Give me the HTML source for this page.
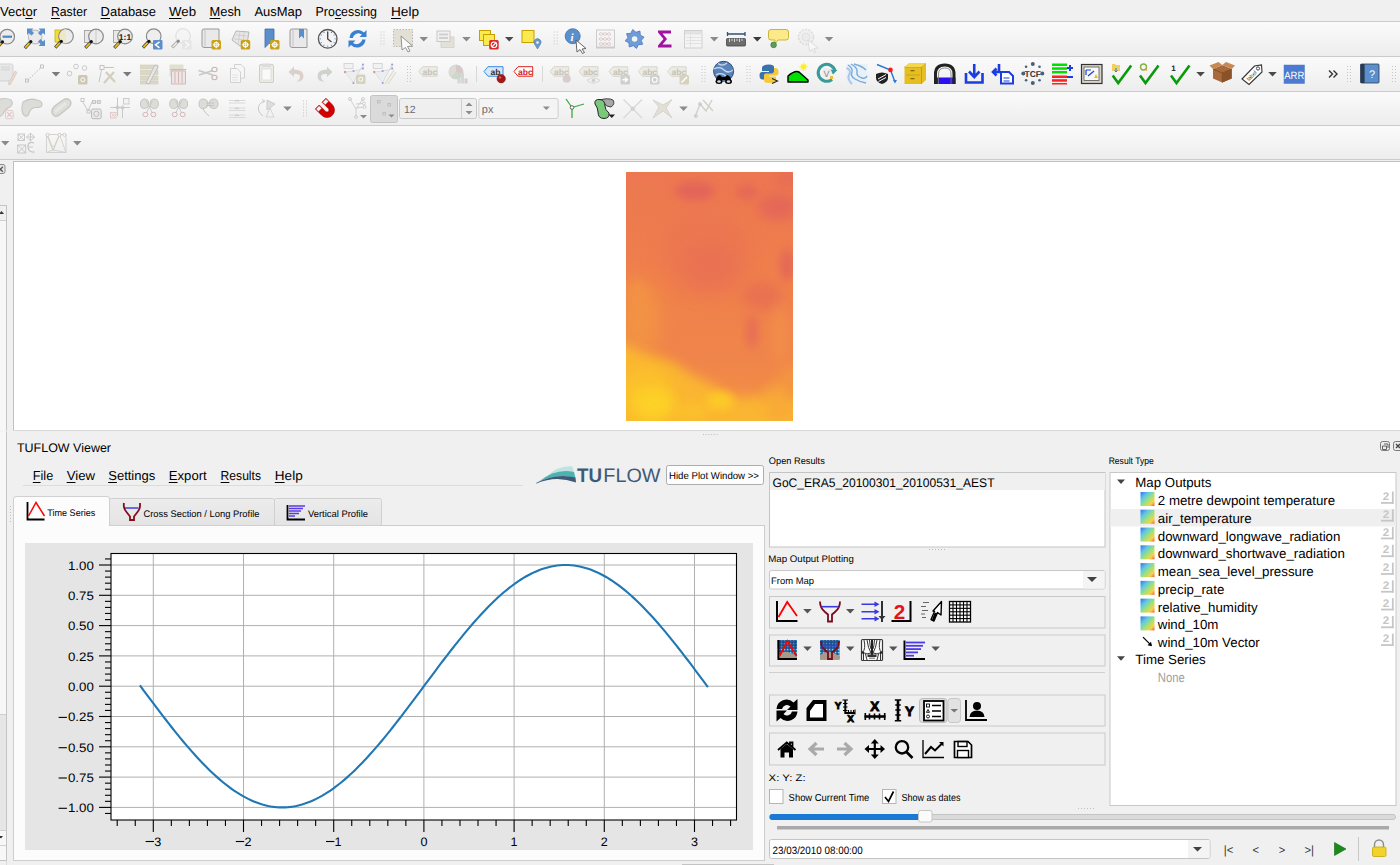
<!DOCTYPE html><html><head><meta charset="utf-8"><style>html,body{margin:0;padding:0;width:1400px;height:865px;overflow:hidden;background:#f0f0f0}svg{display:block;font-family:"Liberation Sans",sans-serif}</style></head><body><svg width="1400" height="865" viewBox="0 0 1400 865" text-rendering="geometricPrecision"><rect x="0" y="0" width="1400" height="865" fill="#f0f0f0" />
<rect x="0" y="0" width="1400" height="21" fill="#f0f0f0" />
<text x="0" y="16" font-size="13.00" fill="#000" textLength="37" lengthAdjust="spacingAndGlyphs" >Vector</text>
<line x1="25.3960756214518" y1="18.5" x2="32.65413658160172" y2="18.5" stroke="#000" stroke-width="1" />
<text x="51" y="16" font-size="13.00" fill="#000" textLength="36" lengthAdjust="spacingAndGlyphs" >Raster</text>
<line x1="51.0" y1="18.5" x2="59.827630113003345" y2="18.5" stroke="#000" stroke-width="1" />
<text x="100.6" y="16" font-size="13.00" fill="#000" textLength="55.4" lengthAdjust="spacingAndGlyphs" >Database</text>
<line x1="100.6" y1="18.5" x2="109.94691732067895" y2="18.5" stroke="#000" stroke-width="1" />
<text x="169" y="16" font-size="13.00" fill="#000" textLength="27" lengthAdjust="spacingAndGlyphs" >Web</text>
<line x1="169.0" y1="18.5" x2="181.5053285287127" y2="18.5" stroke="#000" stroke-width="1" />
<text x="209.6" y="16" font-size="13.00" fill="#000" textLength="31.4" lengthAdjust="spacingAndGlyphs" >Mesh</text>
<line x1="209.6" y1="18.5" x2="220.29674739599974" y2="18.5" stroke="#000" stroke-width="1" />
<text x="254.4" y="16" font-size="13.00" fill="#000" textLength="47.6" lengthAdjust="spacingAndGlyphs" >AusMap</text>
<text x="315.6" y="16" font-size="13.00" fill="#000" textLength="61.4" lengthAdjust="spacingAndGlyphs" >Processing</text>
<line x1="334.91526312464464" y1="18.5" x2="341.12159327816033" y2="18.5" stroke="#000" stroke-width="1" />
<text x="391" y="16" font-size="13.00" fill="#000" textLength="28" lengthAdjust="spacingAndGlyphs" >Help</text>
<line x1="391.0" y1="18.5" x2="400.8325482449476" y2="18.5" stroke="#000" stroke-width="1" />
<defs><linearGradient id="tbg" x1="0" y1="0" x2="0" y2="1"><stop offset="0" stop-color="#fbfbfb"/><stop offset="1" stop-color="#ededed"/></linearGradient></defs>
<rect x="0" y="21" width="1400" height="35" fill="url(#tbg)" />
<line x1="0" y1="21.5" x2="1400" y2="21.5" stroke="#cbcbcb" stroke-width="1" />
<line x1="0" y1="22.5" x2="1400" y2="22.5" stroke="#f9f9f9" stroke-width="1" />
<rect x="0" y="56" width="1400" height="35" fill="url(#tbg)" />
<line x1="0" y1="56.5" x2="1400" y2="56.5" stroke="#cbcbcb" stroke-width="1" />
<line x1="0" y1="57.5" x2="1400" y2="57.5" stroke="#f9f9f9" stroke-width="1" />
<rect x="0" y="91" width="1400" height="34" fill="url(#tbg)" />
<line x1="0" y1="91.5" x2="1400" y2="91.5" stroke="#cbcbcb" stroke-width="1" />
<line x1="0" y1="92.5" x2="1400" y2="92.5" stroke="#f9f9f9" stroke-width="1" />
<rect x="0" y="125" width="1400" height="34" fill="url(#tbg)" />
<line x1="0" y1="125.5" x2="1400" y2="125.5" stroke="#cbcbcb" stroke-width="1" />
<line x1="0" y1="126.5" x2="1400" y2="126.5" stroke="#f9f9f9" stroke-width="1" />
<line x1="0" y1="159.5" x2="1400" y2="159.5" stroke="#cbcbcb" stroke-width="1" />
<rect x="0" y="160" width="13" height="705" fill="#f0f0f0" />
<rect x="-4.5" y="164.5" width="9.5" height="9" fill="#e6e6e6" stroke="#8a8a8a" stroke-width="1" rx="2" />
<path d="M-2 166.8 L2.8 171.8 M-2 171.8 L2.8 166.8" fill="none" stroke="#555" stroke-width="1.3"/>
<rect x="-2" y="205.5" width="8.5" height="660" fill="#f7f7f7" stroke="#c4c4c4" stroke-width="1" />
<rect x="-1.5" y="206" width="7.5" height="14.5" fill="#f0f0f0" />
<line x1="-2" y1="220.5" x2="6" y2="220.5" stroke="#d0d0d0" stroke-width="1" />
<path d="M-1 214 l2.5 -3 l2.5 3 z" fill="#333"/>
<rect x="-1.5" y="715" width="7.5" height="115" fill="#e6e6e6" />
<line x1="-2" y1="714.5" x2="6" y2="714.5" stroke="#d0d0d0" stroke-width="1" />
<line x1="-2" y1="830.5" x2="6" y2="830.5" stroke="#d0d0d0" stroke-width="1" />
<path d="M-1 836 l4 0 l-2 2.5 z" fill="#333"/>
<line x1="-2" y1="845.5" x2="6" y2="845.5" stroke="#d0d0d0" stroke-width="1" />
<line x1="-2" y1="860.5" x2="6" y2="860.5" stroke="#c4c4c4" stroke-width="1" />
<rect x="-2" y="861" width="8.5" height="4" fill="#f0f0f0" />
<rect x="13.5" y="161.5" width="1387" height="269" fill="#ffffff" stroke="#c0c0c0" stroke-width="1" />
<defs><clipPath id="rclip"><rect x="626" y="172" width="167" height="249"/></clipPath><filter id="blur6" x="-50%" y="-50%" width="200%" height="200%"><feGaussianBlur stdDeviation="6"/></filter><filter id="blur10" x="-50%" y="-50%" width="200%" height="200%"><feGaussianBlur stdDeviation="10"/></filter><filter id="blur4" x="-50%" y="-50%" width="200%" height="200%"><feGaussianBlur stdDeviation="4"/></filter><linearGradient id="rgrad" x1="0" y1="0" x2="0" y2="1"><stop offset="0" stop-color="#ec7751"/><stop offset="0.4" stop-color="#ef7f4c"/><stop offset="0.75" stop-color="#f0854a"/><stop offset="1" stop-color="#f39046"/></linearGradient></defs>
<g clip-path="url(#rclip)">
<rect x="626" y="172" width="167" height="249" fill="url(#rgrad)" />
<ellipse cx="705" cy="250" rx="45" ry="40" fill="#ea7352" opacity="0.55" filter="url(#blur10)"/>
<ellipse cx="695" cy="191" rx="20" ry="9" fill="#e1605c" opacity="0.85" filter="url(#blur4)"/>
<ellipse cx="747" cy="192" rx="11" ry="7" fill="#e2625b" opacity="0.75" filter="url(#blur4)"/>
<ellipse cx="778" cy="207" rx="20" ry="13" fill="#e3645a" opacity="0.8" filter="url(#blur6)"/>
<ellipse cx="788" cy="178" rx="14" ry="10" fill="#e56857" opacity="0.6" filter="url(#blur6)"/>
<ellipse cx="787" cy="265" rx="7" ry="16" fill="#e2625a" opacity="0.8" filter="url(#blur4)"/>
<ellipse cx="712" cy="268" rx="30" ry="24" fill="#e86e54" opacity="0.6" filter="url(#blur10)"/>
<ellipse cx="762" cy="296" rx="20" ry="14" fill="#e66b55" opacity="0.65" filter="url(#blur6)"/>
<ellipse cx="752" cy="332" rx="6" ry="17" fill="#e4665a" opacity="0.75" filter="url(#blur4)"/>
<ellipse cx="780" cy="335" rx="8" ry="30" fill="#f39448" opacity="0.6" filter="url(#blur6)"/>
<ellipse cx="640" cy="318" rx="20" ry="38" fill="#f49c40" opacity="0.65" filter="url(#blur10)"/>
<ellipse cx="636" cy="290" rx="10" ry="10" fill="#f39644" opacity="0.5" filter="url(#blur6)"/>
<path d="M610 338 L651 355 L675 363 L690 374 L711 384 L722 391 L737 398 L753 396 L776 399 L800 395 L800 440 L610 440 Z" fill="#fab532" filter="url(#blur6)"/>
<path d="M800 360 L780 372 L770 395 L800 400 Z" fill="#f39a40" opacity="0.7" filter="url(#blur6)"/>
<ellipse cx="646" cy="398" rx="22" ry="26" fill="#fdce28" opacity="0.9" filter="url(#blur10)"/>
<ellipse cx="656" cy="404" rx="18" ry="14" fill="#fdd226" opacity="0.95" filter="url(#blur6)"/>
<ellipse cx="720" cy="401" rx="14" ry="9" fill="#fdcc28" opacity="0.9" filter="url(#blur4)"/>
<ellipse cx="690" cy="412" rx="20" ry="8" fill="#fcc42b" opacity="0.8" filter="url(#blur6)"/>
<ellipse cx="645" cy="378" rx="12" ry="10" fill="#fbbd2e" opacity="0.7" filter="url(#blur6)"/>
<ellipse cx="780" cy="410" rx="14" ry="12" fill="#f7a33a" opacity="0.6" filter="url(#blur6)"/>
<ellipse cx="775" cy="395" rx="14" ry="10" fill="#f9b034" opacity="0.6" filter="url(#blur6)"/>
</g>
<line x1="0" y1="431" x2="1400" y2="431" stroke="#f0f0f0" stroke-width="1" />
<text x="17" y="451.5" font-size="12.50" fill="#000" textLength="94" lengthAdjust="spacingAndGlyphs" >TUFLOW Viewer</text>
<rect x="1380.5" y="441.5" width="9" height="9" fill="#ececec" stroke="#7a7a7a" stroke-width="1" rx="2" />
<rect x="1393.5" y="441.5" width="9" height="9" fill="#ececec" stroke="#7a7a7a" stroke-width="1" rx="2" />
<path d="M1384 444 h4 v4 M1382.5 446 h4 v3.5 h-4 z" fill="none" stroke="#555" stroke-width="0.9"/>
<path d="M1396 444 l4 4 M1400 444 l-4 4" stroke="#444" stroke-width="1.3"/>
<text x="32.8" y="480" font-size="13.00" fill="#000" textLength="20.4" lengthAdjust="spacingAndGlyphs" >File</text>
<line x1="32.8" y1="482.5" x2="40.533087664856474" y2="482.5" stroke="#000" stroke-width="1" />
<text x="66.7" y="480" font-size="13.00" fill="#000" textLength="28.3" lengthAdjust="spacingAndGlyphs" >View</text>
<line x1="66.7" y1="482.5" x2="75.48254579819715" y2="482.5" stroke="#000" stroke-width="1" />
<text x="108.2" y="480" font-size="13.00" fill="#000" textLength="47.1" lengthAdjust="spacingAndGlyphs" >Settings</text>
<line x1="108.2" y1="482.5" x2="116.8952906071614" y2="482.5" stroke="#000" stroke-width="1" />
<text x="168.8" y="480" font-size="13.00" fill="#000" textLength="37.9" lengthAdjust="spacingAndGlyphs" >Export</text>
<line x1="168.8" y1="482.5" x2="177.5475724480969" y2="482.5" stroke="#000" stroke-width="1" />
<text x="220.6" y="480" font-size="13.00" fill="#000" textLength="40.4" lengthAdjust="spacingAndGlyphs" >Results</text>
<line x1="220.6" y1="482.5" x2="229.35017806935332" y2="482.5" stroke="#000" stroke-width="1" />
<text x="274.8" y="480" font-size="13.00" fill="#000" textLength="27.9" lengthAdjust="spacingAndGlyphs" >Help</text>
<line x1="274.8" y1="482.5" x2="284.5974320012156" y2="482.5" stroke="#000" stroke-width="1" />
<line x1="23" y1="485.5" x2="523" y2="485.5" stroke="#dcdcdc" stroke-width="1" />
<path d="M546 477 Q558 465 572.5 466.5 L574 472.5 Q555 470 539 481.5 Z" fill="#bfe3df"/>
<path d="M539 481.5 Q556 468 574 472 L575.5 478 Q556 473 536 483 Z" fill="#4db3b0"/>
<path d="M536 483 Q556 472.5 575.5 477.5 L576 482.5 Q556 475 536.5 483.5 Z" fill="#3f5a76"/>
<text x="577" y="481.6" font-size="19.50" fill="#3f5a76" textLength="25" lengthAdjust="spacingAndGlyphs" font-weight="bold">TU</text>
<text x="603.3" y="481.6" font-size="19.50" fill="#3f5a76" textLength="57.2" lengthAdjust="spacingAndGlyphs" >FLOW</text>
<rect x="666.5" y="465.5" width="97" height="19" fill="#fdfdfd" stroke="#adadad" stroke-width="1" rx="2" />
<text x="669" y="479" font-size="10.00" fill="#000" textLength="90" lengthAdjust="spacingAndGlyphs" >Hide Plot Window &gt;&gt;</text>
<rect x="13.5" y="525.5" width="751" height="335" fill="#fcfcfc" stroke="#cdcdcd" stroke-width="1" />
<defs><linearGradient id="tabg" x1="0" y1="0" x2="0" y2="1"><stop offset="0" stop-color="#ececec"/><stop offset="1" stop-color="#e4e4e4"/></linearGradient></defs>
<rect x="109.5" y="498.5" width="165" height="27" fill="url(#tabg)" stroke="#d0d0d0" stroke-width="1" rx="2" />
<rect x="274.5" y="498.5" width="107" height="27" fill="url(#tabg)" stroke="#d0d0d0" stroke-width="1" rx="2" />
<path d="M13.5 526 V499 Q13.5 496.5 16 496.5 H107 Q109.5 496.5 109.5 499 V526" fill="#fcfcfc" stroke="#d0d0d0" stroke-width="1"/>
<rect x="14" y="524" width="95" height="3" fill="#fcfcfc" />
<path d="M27.5 502 V519.5 H44.5" fill="none" stroke="#000" stroke-width="1.8"/>
<path d="M28.5 516 L36 502.5 L44.5 516" fill="none" stroke="#ff0000" stroke-width="1.5"/>
<text x="47.3" y="515.7" font-size="9.50" fill="#000" textLength="48" lengthAdjust="spacingAndGlyphs" >Time Series</text>
<line x1="124.5" y1="508" x2="138.5" y2="508" stroke="#4a4ae0" stroke-width="1.6" />
<path d="M123.8 503 V506 Q124 509 126.5 512 L130 516.5 V520 H134 V516.5 L137.5 512 Q140 509 140 506 V503" fill="none" stroke="#8b0a1a" stroke-width="1.8"/>
<text x="143.5" y="516.5" font-size="9.50" fill="#000" textLength="116" lengthAdjust="spacingAndGlyphs" >Cross Section / Long Profile</text>
<path d="M287.5 505 V519.5 H305" fill="none" stroke="#000" stroke-width="1.8"/>
<line x1="289" y1="506" x2="305" y2="506" stroke="#5a3ae6" stroke-width="1.5" />
<line x1="289" y1="508.5" x2="303" y2="508.5" stroke="#5a3ae6" stroke-width="1.5" />
<line x1="289" y1="511" x2="301" y2="511" stroke="#5a3ae6" stroke-width="1.5" />
<line x1="289" y1="513.5" x2="299" y2="513.5" stroke="#5a3ae6" stroke-width="1.5" />
<line x1="289" y1="516" x2="295" y2="516" stroke="#5a3ae6" stroke-width="1.5" />
<text x="308" y="516.5" font-size="9.50" fill="#000" textLength="60" lengthAdjust="spacingAndGlyphs" >Vertical Profile</text>
<rect x="25" y="543" width="728" height="307" fill="#e5e5e5" />
<rect x="111" y="553.5" width="625.5" height="266.5" fill="#ffffff" />
<line x1="153.29999999999995" y1="553.5" x2="153.29999999999995" y2="820" stroke="#b0b0b0" stroke-width="1" />
<line x1="243.49999999999997" y1="553.5" x2="243.49999999999997" y2="820" stroke="#b0b0b0" stroke-width="1" />
<line x1="333.7" y1="553.5" x2="333.7" y2="820" stroke="#b0b0b0" stroke-width="1" />
<line x1="423.9" y1="553.5" x2="423.9" y2="820" stroke="#b0b0b0" stroke-width="1" />
<line x1="514.1" y1="553.5" x2="514.1" y2="820" stroke="#b0b0b0" stroke-width="1" />
<line x1="604.3" y1="553.5" x2="604.3" y2="820" stroke="#b0b0b0" stroke-width="1" />
<line x1="694.5" y1="553.5" x2="694.5" y2="820" stroke="#b0b0b0" stroke-width="1" />
<line x1="111" y1="807.4000000000001" x2="736.5" y2="807.4000000000001" stroke="#b0b0b0" stroke-width="1" />
<line x1="111" y1="777.1" x2="736.5" y2="777.1" stroke="#b0b0b0" stroke-width="1" />
<line x1="111" y1="746.8000000000001" x2="736.5" y2="746.8000000000001" stroke="#b0b0b0" stroke-width="1" />
<line x1="111" y1="716.5" x2="736.5" y2="716.5" stroke="#b0b0b0" stroke-width="1" />
<line x1="111" y1="686.2" x2="736.5" y2="686.2" stroke="#b0b0b0" stroke-width="1" />
<line x1="111" y1="655.9000000000001" x2="736.5" y2="655.9000000000001" stroke="#b0b0b0" stroke-width="1" />
<line x1="111" y1="625.6" x2="736.5" y2="625.6" stroke="#b0b0b0" stroke-width="1" />
<line x1="111" y1="595.3000000000001" x2="736.5" y2="595.3000000000001" stroke="#b0b0b0" stroke-width="1" />
<line x1="111" y1="565.0" x2="736.5" y2="565.0" stroke="#b0b0b0" stroke-width="1" />
<polyline points="140.53,686.20 143.36,690.01 146.20,693.81 149.03,697.61 151.86,701.39 154.70,705.16 157.53,708.91 160.36,712.64 163.20,716.34 166.03,720.01 168.87,723.65 171.70,727.26 174.53,730.82 177.37,734.33 180.20,737.80 183.03,741.22 185.87,744.59 188.70,747.90 191.54,751.14 194.37,754.32 197.20,757.44 200.04,760.48 202.87,763.46 205.70,766.35 208.54,769.17 211.37,771.90 214.20,774.55 217.04,777.11 219.87,779.59 222.71,781.97 225.54,784.25 228.37,786.44 231.21,788.53 234.04,790.52 236.87,792.41 239.71,794.19 242.54,795.87 245.38,797.43 248.21,798.89 251.04,800.23 253.88,801.47 256.71,802.59 259.54,803.59 262.38,804.48 265.21,805.25 268.05,805.91 270.88,806.44 273.71,806.86 276.55,807.16 279.38,807.34 282.21,807.40 285.05,807.34 287.88,807.16 290.72,806.86 293.55,806.44 296.38,805.91 299.22,805.25 302.05,804.48 304.88,803.59 307.72,802.59 310.55,801.47 313.39,800.23 316.22,798.89 319.05,797.43 321.89,795.87 324.72,794.19 327.55,792.41 330.39,790.52 333.22,788.53 336.05,786.44 338.89,784.25 341.72,781.97 344.56,779.59 347.39,777.11 350.22,774.55 353.06,771.90 355.89,769.17 358.72,766.35 361.56,763.46 364.39,760.48 367.23,757.44 370.06,754.32 372.89,751.14 375.73,747.90 378.56,744.59 381.39,741.22 384.23,737.80 387.06,734.33 389.90,730.82 392.73,727.26 395.56,723.65 398.40,720.01 401.23,716.34 404.06,712.64 406.90,708.91 409.73,705.16 412.57,701.39 415.40,697.61 418.23,693.81 421.07,690.01 423.90,686.20 426.73,682.39 429.57,678.59 432.40,674.79 435.23,671.01 438.07,667.24 440.90,663.49 443.74,659.76 446.57,656.06 449.40,652.39 452.24,648.75 455.07,645.14 457.90,641.58 460.74,638.07 463.57,634.60 466.41,631.18 469.24,627.81 472.07,624.50 474.91,621.26 477.74,618.08 480.57,614.96 483.41,611.92 486.24,608.94 489.08,606.05 491.91,603.23 494.74,600.50 497.58,597.85 500.41,595.29 503.24,592.81 506.08,590.43 508.91,588.15 511.75,585.96 514.58,583.87 517.41,581.88 520.25,579.99 523.08,578.21 525.91,576.53 528.75,574.97 531.58,573.51 534.41,572.17 537.25,570.93 540.08,569.81 542.92,568.81 545.75,567.92 548.58,567.15 551.42,566.49 554.25,565.96 557.08,565.54 559.92,565.24 562.75,565.06 565.59,565.00 568.42,565.06 571.25,565.24 574.09,565.54 576.92,565.96 579.75,566.49 582.59,567.15 585.42,567.92 588.26,568.81 591.09,569.81 593.92,570.93 596.76,572.17 599.59,573.51 602.42,574.97 605.26,576.53 608.09,578.21 610.93,579.99 613.76,581.88 616.59,583.87 619.43,585.96 622.26,588.15 625.09,590.43 627.93,592.81 630.76,595.29 633.60,597.85 636.43,600.50 639.26,603.23 642.10,606.05 644.93,608.94 647.76,611.92 650.60,614.96 653.43,618.08 656.26,621.26 659.10,624.50 661.93,627.81 664.77,631.18 667.60,634.60 670.43,638.07 673.27,641.58 676.10,645.14 678.93,648.75 681.77,652.39 684.60,656.06 687.44,659.76 690.27,663.49 693.10,667.24 695.94,671.01 698.77,674.79 701.60,678.59 704.44,682.39 707.27,686.20" fill="none" stroke="#1f77b4" stroke-width="2.1" stroke-linecap="square"/>
<rect x="111" y="553.5" width="625.5" height="266.5" fill="none" stroke="#000" stroke-width="1.1" />
<line x1="99" y1="807.4000000000001" x2="111" y2="807.4000000000001" stroke="#000" stroke-width="1.1" />
<text x="68" y="812.1000000000001" font-size="12.30" fill="#000" textLength="25.8" lengthAdjust="spacingAndGlyphs" >1.00</text>
<line x1="58.6" y1="808.3000000000001" x2="66.9" y2="808.3000000000001" stroke="#000" stroke-width="1.1" />
<line x1="99" y1="777.1" x2="111" y2="777.1" stroke="#000" stroke-width="1.1" />
<text x="68" y="781.8000000000001" font-size="12.30" fill="#000" textLength="25.8" lengthAdjust="spacingAndGlyphs" >0.75</text>
<line x1="58.6" y1="778.0" x2="66.9" y2="778.0" stroke="#000" stroke-width="1.1" />
<line x1="99" y1="746.8000000000001" x2="111" y2="746.8000000000001" stroke="#000" stroke-width="1.1" />
<text x="68" y="751.5000000000001" font-size="12.30" fill="#000" textLength="25.8" lengthAdjust="spacingAndGlyphs" >0.50</text>
<line x1="58.6" y1="747.7" x2="66.9" y2="747.7" stroke="#000" stroke-width="1.1" />
<line x1="99" y1="716.5" x2="111" y2="716.5" stroke="#000" stroke-width="1.1" />
<text x="68" y="721.2" font-size="12.30" fill="#000" textLength="25.8" lengthAdjust="spacingAndGlyphs" >0.25</text>
<line x1="58.6" y1="717.4" x2="66.9" y2="717.4" stroke="#000" stroke-width="1.1" />
<line x1="99" y1="686.2" x2="111" y2="686.2" stroke="#000" stroke-width="1.1" />
<text x="68" y="690.9000000000001" font-size="12.30" fill="#000" textLength="25.8" lengthAdjust="spacingAndGlyphs" >0.00</text>
<line x1="99" y1="655.9000000000001" x2="111" y2="655.9000000000001" stroke="#000" stroke-width="1.1" />
<text x="68" y="660.6000000000001" font-size="12.30" fill="#000" textLength="25.8" lengthAdjust="spacingAndGlyphs" >0.25</text>
<line x1="99" y1="625.6" x2="111" y2="625.6" stroke="#000" stroke-width="1.1" />
<text x="68" y="630.3000000000001" font-size="12.30" fill="#000" textLength="25.8" lengthAdjust="spacingAndGlyphs" >0.50</text>
<line x1="99" y1="595.3000000000001" x2="111" y2="595.3000000000001" stroke="#000" stroke-width="1.1" />
<text x="68" y="600.0000000000001" font-size="12.30" fill="#000" textLength="25.8" lengthAdjust="spacingAndGlyphs" >0.75</text>
<line x1="99" y1="565.0" x2="111" y2="565.0" stroke="#000" stroke-width="1.1" />
<text x="68" y="569.7" font-size="12.30" fill="#000" textLength="25.8" lengthAdjust="spacingAndGlyphs" >1.00</text>
<line x1="105" y1="813.46" x2="111" y2="813.46" stroke="#000" stroke-width="1.1" />
<line x1="105" y1="801.34" x2="111" y2="801.34" stroke="#000" stroke-width="1.1" />
<line x1="105" y1="795.2800000000001" x2="111" y2="795.2800000000001" stroke="#000" stroke-width="1.1" />
<line x1="105" y1="789.22" x2="111" y2="789.22" stroke="#000" stroke-width="1.1" />
<line x1="105" y1="783.1600000000001" x2="111" y2="783.1600000000001" stroke="#000" stroke-width="1.1" />
<line x1="105" y1="771.0400000000001" x2="111" y2="771.0400000000001" stroke="#000" stroke-width="1.1" />
<line x1="105" y1="764.98" x2="111" y2="764.98" stroke="#000" stroke-width="1.1" />
<line x1="105" y1="758.9200000000001" x2="111" y2="758.9200000000001" stroke="#000" stroke-width="1.1" />
<line x1="105" y1="752.86" x2="111" y2="752.86" stroke="#000" stroke-width="1.1" />
<line x1="105" y1="740.74" x2="111" y2="740.74" stroke="#000" stroke-width="1.1" />
<line x1="105" y1="734.6800000000001" x2="111" y2="734.6800000000001" stroke="#000" stroke-width="1.1" />
<line x1="105" y1="728.62" x2="111" y2="728.62" stroke="#000" stroke-width="1.1" />
<line x1="105" y1="722.5600000000001" x2="111" y2="722.5600000000001" stroke="#000" stroke-width="1.1" />
<line x1="105" y1="710.44" x2="111" y2="710.44" stroke="#000" stroke-width="1.1" />
<line x1="105" y1="704.38" x2="111" y2="704.38" stroke="#000" stroke-width="1.1" />
<line x1="105" y1="698.32" x2="111" y2="698.32" stroke="#000" stroke-width="1.1" />
<line x1="105" y1="692.26" x2="111" y2="692.26" stroke="#000" stroke-width="1.1" />
<line x1="105" y1="680.1400000000001" x2="111" y2="680.1400000000001" stroke="#000" stroke-width="1.1" />
<line x1="105" y1="674.08" x2="111" y2="674.08" stroke="#000" stroke-width="1.1" />
<line x1="105" y1="668.0200000000001" x2="111" y2="668.0200000000001" stroke="#000" stroke-width="1.1" />
<line x1="105" y1="661.96" x2="111" y2="661.96" stroke="#000" stroke-width="1.1" />
<line x1="105" y1="649.84" x2="111" y2="649.84" stroke="#000" stroke-width="1.1" />
<line x1="105" y1="643.7800000000001" x2="111" y2="643.7800000000001" stroke="#000" stroke-width="1.1" />
<line x1="105" y1="637.72" x2="111" y2="637.72" stroke="#000" stroke-width="1.1" />
<line x1="105" y1="631.6600000000001" x2="111" y2="631.6600000000001" stroke="#000" stroke-width="1.1" />
<line x1="105" y1="619.5400000000001" x2="111" y2="619.5400000000001" stroke="#000" stroke-width="1.1" />
<line x1="105" y1="613.48" x2="111" y2="613.48" stroke="#000" stroke-width="1.1" />
<line x1="105" y1="607.4200000000001" x2="111" y2="607.4200000000001" stroke="#000" stroke-width="1.1" />
<line x1="105" y1="601.36" x2="111" y2="601.36" stroke="#000" stroke-width="1.1" />
<line x1="105" y1="589.24" x2="111" y2="589.24" stroke="#000" stroke-width="1.1" />
<line x1="105" y1="583.1800000000001" x2="111" y2="583.1800000000001" stroke="#000" stroke-width="1.1" />
<line x1="105" y1="577.12" x2="111" y2="577.12" stroke="#000" stroke-width="1.1" />
<line x1="105" y1="571.0600000000001" x2="111" y2="571.0600000000001" stroke="#000" stroke-width="1.1" />
<line x1="105" y1="558.94" x2="111" y2="558.94" stroke="#000" stroke-width="1.1" />
<line x1="153.29999999999995" y1="820" x2="153.29999999999995" y2="832" stroke="#000" stroke-width="1.1" />
<line x1="145.59999999999997" y1="841.5" x2="153.99999999999994" y2="841.5" stroke="#000" stroke-width="1.1" />
<text x="154.19999999999996" y="845.5" font-size="12.30" fill="#000" textLength="7" lengthAdjust="spacingAndGlyphs" >3</text>
<line x1="243.49999999999997" y1="820" x2="243.49999999999997" y2="832" stroke="#000" stroke-width="1.1" />
<line x1="235.79999999999998" y1="841.5" x2="244.19999999999996" y2="841.5" stroke="#000" stroke-width="1.1" />
<text x="244.39999999999998" y="845.5" font-size="12.30" fill="#000" textLength="7" lengthAdjust="spacingAndGlyphs" >2</text>
<line x1="333.7" y1="820" x2="333.7" y2="832" stroke="#000" stroke-width="1.1" />
<line x1="326.0" y1="841.5" x2="334.4" y2="841.5" stroke="#000" stroke-width="1.1" />
<text x="334.59999999999997" y="845.5" font-size="12.30" fill="#000" textLength="7" lengthAdjust="spacingAndGlyphs" >1</text>
<line x1="423.9" y1="820" x2="423.9" y2="832" stroke="#000" stroke-width="1.1" />
<text x="420.4" y="845.5" font-size="12.30" fill="#000" textLength="7" lengthAdjust="spacingAndGlyphs" >0</text>
<line x1="514.1" y1="820" x2="514.1" y2="832" stroke="#000" stroke-width="1.1" />
<text x="510.6" y="845.5" font-size="12.30" fill="#000" textLength="7" lengthAdjust="spacingAndGlyphs" >1</text>
<line x1="604.3" y1="820" x2="604.3" y2="832" stroke="#000" stroke-width="1.1" />
<text x="600.8" y="845.5" font-size="12.30" fill="#000" textLength="7" lengthAdjust="spacingAndGlyphs" >2</text>
<line x1="694.5" y1="820" x2="694.5" y2="832" stroke="#000" stroke-width="1.1" />
<text x="691.0" y="845.5" font-size="12.30" fill="#000" textLength="7" lengthAdjust="spacingAndGlyphs" >3</text>
<line x1="117.21999999999991" y1="820" x2="117.21999999999991" y2="826" stroke="#000" stroke-width="1.1" />
<line x1="135.25999999999993" y1="820" x2="135.25999999999993" y2="826" stroke="#000" stroke-width="1.1" />
<line x1="171.33999999999995" y1="820" x2="171.33999999999995" y2="826" stroke="#000" stroke-width="1.1" />
<line x1="189.37999999999997" y1="820" x2="189.37999999999997" y2="826" stroke="#000" stroke-width="1.1" />
<line x1="207.41999999999993" y1="820" x2="207.41999999999993" y2="826" stroke="#000" stroke-width="1.1" />
<line x1="225.45999999999995" y1="820" x2="225.45999999999995" y2="826" stroke="#000" stroke-width="1.1" />
<line x1="261.53999999999996" y1="820" x2="261.53999999999996" y2="826" stroke="#000" stroke-width="1.1" />
<line x1="279.5799999999999" y1="820" x2="279.5799999999999" y2="826" stroke="#000" stroke-width="1.1" />
<line x1="297.61999999999995" y1="820" x2="297.61999999999995" y2="826" stroke="#000" stroke-width="1.1" />
<line x1="315.65999999999997" y1="820" x2="315.65999999999997" y2="826" stroke="#000" stroke-width="1.1" />
<line x1="351.73999999999995" y1="820" x2="351.73999999999995" y2="826" stroke="#000" stroke-width="1.1" />
<line x1="369.78" y1="820" x2="369.78" y2="826" stroke="#000" stroke-width="1.1" />
<line x1="387.82" y1="820" x2="387.82" y2="826" stroke="#000" stroke-width="1.1" />
<line x1="405.85999999999996" y1="820" x2="405.85999999999996" y2="826" stroke="#000" stroke-width="1.1" />
<line x1="441.94" y1="820" x2="441.94" y2="826" stroke="#000" stroke-width="1.1" />
<line x1="459.97999999999996" y1="820" x2="459.97999999999996" y2="826" stroke="#000" stroke-width="1.1" />
<line x1="478.02" y1="820" x2="478.02" y2="826" stroke="#000" stroke-width="1.1" />
<line x1="496.06" y1="820" x2="496.06" y2="826" stroke="#000" stroke-width="1.1" />
<line x1="532.14" y1="820" x2="532.14" y2="826" stroke="#000" stroke-width="1.1" />
<line x1="550.18" y1="820" x2="550.18" y2="826" stroke="#000" stroke-width="1.1" />
<line x1="568.22" y1="820" x2="568.22" y2="826" stroke="#000" stroke-width="1.1" />
<line x1="586.26" y1="820" x2="586.26" y2="826" stroke="#000" stroke-width="1.1" />
<line x1="622.34" y1="820" x2="622.34" y2="826" stroke="#000" stroke-width="1.1" />
<line x1="640.38" y1="820" x2="640.38" y2="826" stroke="#000" stroke-width="1.1" />
<line x1="658.42" y1="820" x2="658.42" y2="826" stroke="#000" stroke-width="1.1" />
<line x1="676.46" y1="820" x2="676.46" y2="826" stroke="#000" stroke-width="1.1" />
<line x1="712.54" y1="820" x2="712.54" y2="826" stroke="#000" stroke-width="1.1" />
<line x1="730.58" y1="820" x2="730.58" y2="826" stroke="#000" stroke-width="1.1" />
<text x="768.8" y="463.7" font-size="9.50" fill="#000" textLength="56" lengthAdjust="spacingAndGlyphs" >Open Results</text>
<rect x="769.5" y="472.5" width="335.5" height="74.5" fill="#ffffff" stroke="#c4c4c4" stroke-width="1" />
<rect x="770" y="473" width="335" height="17" fill="#f0f0f0" />
<text x="772.5" y="486.8" font-size="12.50" fill="#000" textLength="222" lengthAdjust="spacingAndGlyphs" >GoC_ERA5_20100301_20100531_AEST</text>
<rect x="929" y="549" width="1" height="1" fill="#b8b8b8" />
<rect x="932" y="549" width="1" height="1" fill="#b8b8b8" />
<rect x="935" y="549" width="1" height="1" fill="#b8b8b8" />
<rect x="938" y="549" width="1" height="1" fill="#b8b8b8" />
<rect x="941" y="549" width="1" height="1" fill="#b8b8b8" />
<rect x="944" y="549" width="1" height="1" fill="#b8b8b8" />
<text x="768.3" y="562.2" font-size="9.50" fill="#000" textLength="85.5" lengthAdjust="spacingAndGlyphs" >Map Output Plotting</text>
<rect x="769.5" y="570.5" width="335.5" height="18.5" fill="#ffffff" stroke="#c8c8c8" stroke-width="1" rx="2" />
<rect x="1083" y="571" width="21.5" height="17.5" fill="#f4f4f4" />
<text x="771" y="584" font-size="9.50" fill="#000" textLength="43" lengthAdjust="spacingAndGlyphs" >From Map</text>
<path d="M1087 577 h10 l-5 5 z" fill="#404040"/>
<rect x="769.5" y="596.5" width="335.5" height="31.5" fill="none" stroke="#c9c9c9" stroke-width="1" />
<rect x="769.5" y="635.0" width="335.5" height="31" fill="none" stroke="#c9c9c9" stroke-width="1" />
<rect x="769.5" y="695.0" width="335.5" height="31" fill="none" stroke="#c9c9c9" stroke-width="1" />
<rect x="769.5" y="733.0" width="335.5" height="32" fill="none" stroke="#c9c9c9" stroke-width="1" />
<line x1="769" y1="672.5" x2="1105" y2="672.5" stroke="#cfcfcf" stroke-width="1" />
<text x="768.6" y="780.7" font-size="9.50" fill="#000" textLength="37" lengthAdjust="spacingAndGlyphs" >X:  Y:  Z:</text>
<rect x="769.5" y="789.5" width="13.5" height="14" fill="#ffffff" stroke="#b5b5b5" stroke-width="1" />
<text x="788.6" y="801" font-size="10.20" fill="#000" textLength="80.7" lengthAdjust="spacingAndGlyphs" >Show Current Time</text>
<rect x="882.5" y="789.5" width="13.5" height="14" fill="#ffffff" stroke="#b5b5b5" stroke-width="1" />
<path d="M885 797 L888.5 801.5 L893.5 791.5" fill="none" stroke="#000" stroke-width="1.7"/>
<text x="901.4" y="801" font-size="10.20" fill="#000" textLength="59" lengthAdjust="spacingAndGlyphs" >Show as dates</text>
<rect x="1078" y="808" width="1" height="1" fill="#c0c0c0" />
<rect x="1081" y="808" width="1" height="1" fill="#c0c0c0" />
<rect x="1084" y="808" width="1" height="1" fill="#c0c0c0" />
<rect x="1087" y="808" width="1" height="1" fill="#c0c0c0" />
<rect x="1090" y="808" width="1" height="1" fill="#c0c0c0" />
<rect x="1093" y="808" width="1" height="1" fill="#c0c0c0" />
<rect x="769.5" y="814.5" width="626" height="5" fill="#dadada" stroke="#c4c4c4" stroke-width="1" rx="2.5" />
<rect x="769.5" y="814" width="152" height="6" fill="#1979d5" rx="3" />
<rect x="918.5" y="810.5" width="13.5" height="11.5" fill="#fbfbfb" stroke="#c6c6c6" stroke-width="1" rx="2" />
<rect x="777" y="826" width="612" height="3.5" fill="#a9a9a9" />
<rect x="769.5" y="839.5" width="440.5" height="19" fill="#ffffff" stroke="#c4c4c4" stroke-width="1" rx="2" />
<rect x="1188" y="840" width="21.5" height="18" fill="#f4f4f4" />
<text x="772.5" y="853.8" font-size="10.60" fill="#000" textLength="90.3" lengthAdjust="spacingAndGlyphs" >23/03/2010 08:00:00</text>
<path d="M1193 847 h9 l-4.5 4.5 z" fill="#404040"/>
<text x="1223.8" y="853.5" font-size="12.00" fill="#333" textLength="9.5" lengthAdjust="spacingAndGlyphs" >|&lt;</text>
<text x="1252.5" y="853.5" font-size="12.00" fill="#333" textLength="6.5" lengthAdjust="spacingAndGlyphs" >&lt;</text>
<text x="1278.8" y="853.5" font-size="12.00" fill="#333" textLength="6.5" lengthAdjust="spacingAndGlyphs" >&gt;</text>
<text x="1304.5" y="853.5" font-size="12.00" fill="#333" textLength="9.5" lengthAdjust="spacingAndGlyphs" >&gt;|</text>
<path d="M1334.5 842.5 L1346 849 L1334.5 855.5 Z" fill="#1a8a1a" stroke="#0d6a0d" stroke-width="0.6"/>
<line x1="1358.5" y1="837" x2="1358.5" y2="861" stroke="#c8c8c8" stroke-width="1" />
<path d="M1374.5 847 V844.5 A4.5 4.5 0 0 1 1383.5 844.5 V847" fill="none" stroke="#8c8c8c" stroke-width="1.4"/>
<rect x="1372.5" y="847" width="13.5" height="9.5" fill="#f1d32a" stroke="#c8a800" stroke-width="0.8" rx="1.5" />
<text x="1108.7" y="463.7" font-size="9.50" fill="#000" textLength="45" lengthAdjust="spacingAndGlyphs" >Result Type</text>
<rect x="1110" y="472.5" width="286" height="333" fill="#ffffff" stroke="#c8c8c8" stroke-width="1" />
<rect x="1110.5" y="509" width="285" height="17.5" fill="#efefef" />
<path d="M1117 479.5 h8 l-4 4.5 z" fill="#444"/>
<text x="1135.3" y="487.3" font-size="13.30" fill="#000" textLength="76" lengthAdjust="spacingAndGlyphs" >Map Outputs</text>
<defs><linearGradient id="mico" x1="0" y1="0" x2="1" y2="1"><stop offset="0" stop-color="#3a6fe0"/><stop offset="0.3" stop-color="#5ec8e8"/><stop offset="0.55" stop-color="#9fe07a"/><stop offset="0.8" stop-color="#f7d24a"/><stop offset="1" stop-color="#f05a3a"/></linearGradient></defs>
<rect x="1140.5" y="492.0" width="14" height="14" fill="url(#mico)" />
<text x="1157.8" y="505.0" font-size="13.30" fill="#000" >2 metre dewpoint temperature</text>
<text x="1382.7" y="500.0" font-size="11" font-weight="bold" fill="#c6c6c6" textLength="6.5" lengthAdjust="spacingAndGlyphs">2</text>
<line x1="1392.8" y1="491.5" x2="1392.8" y2="503.8" stroke="#c6c6c6" stroke-width="1.8" />
<line x1="1381" y1="502.9" x2="1393.7" y2="502.9" stroke="#c6c6c6" stroke-width="1.8" />
<rect x="1140.5" y="509.77" width="14" height="14" fill="url(#mico)" />
<text x="1157.8" y="522.77" font-size="13.30" fill="#000" >air_temperature</text>
<text x="1382.7" y="517.77" font-size="11" font-weight="bold" fill="#c6c6c6" textLength="6.5" lengthAdjust="spacingAndGlyphs">2</text>
<line x1="1392.8" y1="509.27" x2="1392.8" y2="521.5699999999999" stroke="#c6c6c6" stroke-width="1.8" />
<line x1="1381" y1="520.67" x2="1393.7" y2="520.67" stroke="#c6c6c6" stroke-width="1.8" />
<rect x="1140.5" y="527.54" width="14" height="14" fill="url(#mico)" />
<text x="1157.8" y="540.54" font-size="13.30" fill="#000" >downward_longwave_radiation</text>
<text x="1382.7" y="535.54" font-size="11" font-weight="bold" fill="#c6c6c6" textLength="6.5" lengthAdjust="spacingAndGlyphs">2</text>
<line x1="1392.8" y1="527.04" x2="1392.8" y2="539.3399999999999" stroke="#c6c6c6" stroke-width="1.8" />
<line x1="1381" y1="538.4399999999999" x2="1393.7" y2="538.4399999999999" stroke="#c6c6c6" stroke-width="1.8" />
<rect x="1140.5" y="545.31" width="14" height="14" fill="url(#mico)" />
<text x="1157.8" y="558.31" font-size="13.30" fill="#000" >downward_shortwave_radiation</text>
<text x="1382.7" y="553.31" font-size="11" font-weight="bold" fill="#c6c6c6" textLength="6.5" lengthAdjust="spacingAndGlyphs">2</text>
<line x1="1392.8" y1="544.81" x2="1392.8" y2="557.1099999999999" stroke="#c6c6c6" stroke-width="1.8" />
<line x1="1381" y1="556.2099999999999" x2="1393.7" y2="556.2099999999999" stroke="#c6c6c6" stroke-width="1.8" />
<rect x="1140.5" y="563.08" width="14" height="14" fill="url(#mico)" />
<text x="1157.8" y="576.08" font-size="13.30" fill="#000" >mean_sea_level_pressure</text>
<text x="1382.7" y="571.08" font-size="11" font-weight="bold" fill="#c6c6c6" textLength="6.5" lengthAdjust="spacingAndGlyphs">2</text>
<line x1="1392.8" y1="562.58" x2="1392.8" y2="574.88" stroke="#c6c6c6" stroke-width="1.8" />
<line x1="1381" y1="573.98" x2="1393.7" y2="573.98" stroke="#c6c6c6" stroke-width="1.8" />
<rect x="1140.5" y="580.85" width="14" height="14" fill="url(#mico)" />
<text x="1157.8" y="593.85" font-size="13.30" fill="#000" >precip_rate</text>
<text x="1382.7" y="588.85" font-size="11" font-weight="bold" fill="#c6c6c6" textLength="6.5" lengthAdjust="spacingAndGlyphs">2</text>
<line x1="1392.8" y1="580.35" x2="1392.8" y2="592.65" stroke="#c6c6c6" stroke-width="1.8" />
<line x1="1381" y1="591.75" x2="1393.7" y2="591.75" stroke="#c6c6c6" stroke-width="1.8" />
<rect x="1140.5" y="598.62" width="14" height="14" fill="url(#mico)" />
<text x="1157.8" y="611.62" font-size="13.30" fill="#000" >relative_humidity</text>
<text x="1382.7" y="606.62" font-size="11" font-weight="bold" fill="#c6c6c6" textLength="6.5" lengthAdjust="spacingAndGlyphs">2</text>
<line x1="1392.8" y1="598.12" x2="1392.8" y2="610.42" stroke="#c6c6c6" stroke-width="1.8" />
<line x1="1381" y1="609.52" x2="1393.7" y2="609.52" stroke="#c6c6c6" stroke-width="1.8" />
<rect x="1140.5" y="616.39" width="14" height="14" fill="url(#mico)" />
<text x="1157.8" y="629.39" font-size="13.30" fill="#000" >wind_10m</text>
<text x="1382.7" y="624.39" font-size="11" font-weight="bold" fill="#c6c6c6" textLength="6.5" lengthAdjust="spacingAndGlyphs">2</text>
<line x1="1392.8" y1="615.89" x2="1392.8" y2="628.1899999999999" stroke="#c6c6c6" stroke-width="1.8" />
<line x1="1381" y1="627.29" x2="1393.7" y2="627.29" stroke="#c6c6c6" stroke-width="1.8" />
<path d="M1143 637.16 L1151 645.16" stroke="#000" stroke-width="1.2"/><path d="M1152 646.16 l-4.5 -1 l3.5 -3.5 z" fill="#000"/>
<text x="1157.8" y="647.16" font-size="13.30" fill="#000" >wind_10m Vector</text>
<text x="1382.7" y="642.16" font-size="11" font-weight="bold" fill="#c6c6c6" textLength="6.5" lengthAdjust="spacingAndGlyphs">2</text>
<line x1="1392.8" y1="633.66" x2="1392.8" y2="645.9599999999999" stroke="#c6c6c6" stroke-width="1.8" />
<line x1="1381" y1="645.06" x2="1393.7" y2="645.06" stroke="#c6c6c6" stroke-width="1.8" />
<path d="M1117 656.3 h8 l-4 4.5 z" fill="#444"/>
<text x="1135.3" y="664.3" font-size="13.30" fill="#000" >Time Series</text>
<text x="1157.8" y="682.3" font-size="13.30" fill="#a0a0a0" textLength="27" lengthAdjust="spacingAndGlyphs" >None</text>
<rect x="682" y="864" width="92" height="1" fill="#c4c4c4" />
<rect x="10" y="506" width="1" height="1" fill="#c0c0c0" />
<rect x="10" y="509" width="1" height="1" fill="#c0c0c0" />
<rect x="10" y="512" width="1" height="1" fill="#c0c0c0" />
<rect x="10" y="515" width="1" height="1" fill="#c0c0c0" />
<rect x="10" y="518" width="1" height="1" fill="#c0c0c0" />
<rect x="10" y="521" width="1" height="1" fill="#c0c0c0" />
<rect x="703.0" y="434" width="1" height="1" fill="#bdbdbd" />
<rect x="705.7" y="434" width="1" height="1" fill="#bdbdbd" />
<rect x="708.4" y="434" width="1" height="1" fill="#bdbdbd" />
<rect x="711.1" y="434" width="1" height="1" fill="#bdbdbd" />
<rect x="713.8" y="434" width="1" height="1" fill="#bdbdbd" />
<rect x="716.5" y="434" width="1" height="1" fill="#bdbdbd" />
<line x1="2.2359999999999998" y1="41.956" x2="-3.564" y2="48.156000000000006" stroke="#4a4a4a" stroke-width="3.2"/><line x1="1.0359999999999998" y1="43.256" x2="-3.064" y2="47.656000000000006" stroke="#f2c21a" stroke-width="1.7"/><circle cx="7.2" cy="36.7" r="7.3" fill="#ececec" stroke="#8a8a8a" stroke-width="1.2"/><line x1="2.5" y1="36.7" x2="12" y2="36.7" stroke="#4f86c4" stroke-width="2.2"/><circle cx="2.5359999999999996" cy="41.656000000000006" r="1.5" fill="#111"/>
<rect x="24.5" y="28.5" width="20.5" height="17.5" fill="none"/>
<line x1="30.576" y1="41.896" x2="24.776" y2="48.096000000000004" stroke="#4a4a4a" stroke-width="3.2"/><line x1="29.376" y1="43.196" x2="25.276" y2="47.596000000000004" stroke="#f2c21a" stroke-width="1.7"/><circle cx="35.2" cy="37" r="6.8" fill="#eaeaea" stroke="#c0c0c0" stroke-width="1.2"/><circle cx="30.876" cy="41.596000000000004" r="1.5" fill="#111"/>
<path d="M27 28.5 h6.5 l-2 2 l2.5 2.5 l-2.5 2.5 l-2.5 -2.5 l-2 2 z" fill="#5a8fcb"/><path d="M45 28.5 h-6.5 l2 2 l-2.5 2.5 l2.5 2.5 l2.5 -2.5 l2 2 z" fill="#5a8fcb"/><path d="M45 46 h-6.5 l2 -2 l-2.5 -2.5 l2.5 -2.5 l2.5 2.5 l2 -2 z" fill="#5a8fcb"/>
<rect x="55" y="30" width="7" height="12" fill="#f5dc3a" stroke="#c9b200" stroke-width="0.8"/>
<line x1="61.036" y1="41.456" x2="55.236000000000004" y2="47.656000000000006" stroke="#4a4a4a" stroke-width="3.2"/><line x1="59.836" y1="42.756" x2="55.736000000000004" y2="47.156000000000006" stroke="#f2c21a" stroke-width="1.7"/><circle cx="66" cy="36.2" r="7.3" fill="#ececec" stroke="#8a8a8a" stroke-width="1.2"/><path d="M66 29 A7.3 7.3 0 0 0 66 43.5 Z" fill="#efe8c8"/><circle cx="61.336" cy="41.156000000000006" r="1.5" fill="#111"/>
<rect x="84.5" y="30.5" width="7" height="12" fill="#e8e8e8" stroke="#9a9a9a" stroke-width="0.8"/>
<line x1="91.036" y1="41.756" x2="85.236" y2="47.956" stroke="#4a4a4a" stroke-width="3.2"/><line x1="89.836" y1="43.056" x2="85.736" y2="47.456" stroke="#f2c21a" stroke-width="1.7"/><circle cx="96" cy="36.5" r="7.3" fill="#ececec" stroke="#8a8a8a" stroke-width="1.2"/><line x1="96" y1="30" x2="96" y2="43" stroke="#c8c8c8" stroke-width="1"/><circle cx="91.336" cy="41.456" r="1.5" fill="#111"/>
<rect x="113.5" y="30.5" width="7" height="12" fill="#e8e8e8" stroke="#9a9a9a" stroke-width="0.8"/>
<line x1="120.036" y1="41.756" x2="114.236" y2="47.956" stroke="#4a4a4a" stroke-width="3.2"/><line x1="118.836" y1="43.056" x2="114.736" y2="47.456" stroke="#f2c21a" stroke-width="1.7"/><circle cx="125" cy="36.5" r="7.3" fill="#ececec" stroke="#8a8a8a" stroke-width="1.2"/><text x="125" y="40" font-size="8.5" font-weight="bold" text-anchor="middle" fill="#222">1:1</text><circle cx="120.336" cy="41.456" r="1.5" fill="#111"/>
<line x1="148.736" y1="41.456" x2="142.93599999999998" y2="47.656000000000006" stroke="#4a4a4a" stroke-width="3.2"/><line x1="147.536" y1="42.756" x2="143.43599999999998" y2="47.156000000000006" stroke="#f2c21a" stroke-width="1.7"/><circle cx="153.7" cy="36.2" r="7.3" fill="#eeeeee" stroke="#8a8a8a" stroke-width="1.2"/><circle cx="149.036" cy="41.156000000000006" r="1.5" fill="#111"/>
<rect x="153" y="40" width="9.5" height="9.5" fill="#5a8fcb" rx="1"/><path d="M159.5 41.8 l-4 3 l4 3" fill="none" stroke="#fff" stroke-width="1.5"/>
<g opacity="0.45">
<line x1="178.036" y1="41.256" x2="172.236" y2="47.456" stroke="#4a4a4a" stroke-width="3.2"/><line x1="176.836" y1="42.556" x2="172.736" y2="46.956" stroke="#e8e8d0" stroke-width="1.7"/><circle cx="183" cy="36" r="7.3" fill="#f3f3f3" stroke="#c8c8c8" stroke-width="1.2"/><circle cx="178.336" cy="40.956" r="1.5" fill="#111"/>
<rect x="182" y="40" width="9.5" height="9.5" fill="#d8d8d8" rx="1"/><path d="M185 41.8 l4 3 l-4 3" fill="none" stroke="#fff" stroke-width="1.5"/></g>
<path d="M204 29 H219 V47.5 H204 Q202 47.5 202 45.5 V31 Q202 29 204 29 Z" fill="#e9e9e9" stroke="#9a9a9a" stroke-width="1"/><line x1="205" y1="30" x2="205" y2="46.5" stroke="#c4c4c4" stroke-width="1"/>
<rect x="211.5" y="40" width="9.5" height="9.5" rx="1.5" fill="#c9a21a"/><circle cx="216.25" cy="44.75" r="2.2" fill="none" stroke="#fff" stroke-width="1.1"/><path d="M216.25 41.2 v7.1 M212.7 44.75 h7.1" stroke="#fff" stroke-width="0.8"/>
<path d="M232 40 L236 31 L249 32 L247 44 L240 46 Z" fill="#e6e6e6" stroke="#b0b0b0" stroke-width="0.9"/><path d="M236 35 L248 36 M234 39 L247 40 M240 31.5 L238 45 M244 32 L243 45" stroke="#c8c8c8" stroke-width="0.7"/>
<rect x="240.7" y="40" width="9.5" height="9.5" rx="1.5" fill="#c9a21a"/><circle cx="245.45" cy="44.75" r="2.2" fill="none" stroke="#fff" stroke-width="1.1"/><path d="M245.45 41.2 v7.1 M241.89999999999998 44.75 h7.1" stroke="#fff" stroke-width="0.8"/>
<path d="M265 29 H274 V47.5 L269.5 43 L265 47.5 Z" fill="#5b8fcb" stroke="#3d6aa8" stroke-width="0.8"/>
<rect x="270" y="40" width="9.5" height="9.5" rx="1.5" fill="#c9a21a"/><circle cx="274.75" cy="44.75" r="2.2" fill="none" stroke="#fff" stroke-width="1.1"/><path d="M274.75 41.2 v7.1 M271.2 44.75 h7.1" stroke="#fff" stroke-width="0.8"/>
<path d="M292 29 H307 V47.5 H292 Q290 47.5 290 45.5 V31 Q290 29 292 29 Z" fill="#e9e9e9" stroke="#9a9a9a" stroke-width="1"/><line x1="293" y1="30" x2="293" y2="46.5" stroke="#c4c4c4" stroke-width="1"/>
<path d="M299 29 H304 V38.5 L301.5 36 L299 38.5 Z" fill="#5b8fcb"/>
<circle cx="327.7" cy="38.8" r="9.3" fill="#f4f4f4" stroke="#555" stroke-width="1.3"/><path d="M327.7 32 V39 L331.5 42" fill="none" stroke="#444" stroke-width="1.3"/>
<circle cx="335.10" cy="38.80" r="0.6" fill="#4f86c4"/>
<circle cx="334.11" cy="42.50" r="0.6" fill="#4f86c4"/>
<circle cx="331.40" cy="45.21" r="0.6" fill="#4f86c4"/>
<circle cx="327.70" cy="46.20" r="0.6" fill="#4f86c4"/>
<circle cx="324.00" cy="45.21" r="0.6" fill="#4f86c4"/>
<circle cx="321.29" cy="42.50" r="0.6" fill="#4f86c4"/>
<circle cx="320.30" cy="38.80" r="0.6" fill="#4f86c4"/>
<circle cx="321.29" cy="35.10" r="0.6" fill="#4f86c4"/>
<circle cx="324.00" cy="32.39" r="0.6" fill="#4f86c4"/>
<circle cx="327.70" cy="31.40" r="0.6" fill="#4f86c4"/>
<circle cx="331.40" cy="32.39" r="0.6" fill="#4f86c4"/>
<circle cx="334.11" cy="35.10" r="0.6" fill="#4f86c4"/>
<path d="M349.5 38 A8.5 8.5 0 0 1 364 32.5 L366.5 30 V37 H359.5 L362 34.5 A5.8 5.8 0 0 0 352.8 38 Z" fill="#3a7fd0"/><path d="M365.5 39.5 A8.5 8.5 0 0 1 351 45 L348.5 47.5 V40.5 H355.5 L353 43 A5.8 5.8 0 0 0 362.2 39.5 Z" fill="#3a7fd0"/>
<rect x="380.5" y="31.5" width="1" height="1" fill="#c4c4c4"/><rect x="383.5" y="31.5" width="1" height="1" fill="#c4c4c4"/><rect x="380.5" y="34.5" width="1" height="1" fill="#c4c4c4"/><rect x="383.5" y="34.5" width="1" height="1" fill="#c4c4c4"/><rect x="380.5" y="37.5" width="1" height="1" fill="#c4c4c4"/><rect x="383.5" y="37.5" width="1" height="1" fill="#c4c4c4"/><rect x="380.5" y="40.5" width="1" height="1" fill="#c4c4c4"/><rect x="383.5" y="40.5" width="1" height="1" fill="#c4c4c4"/><rect x="380.5" y="43.5" width="1" height="1" fill="#c4c4c4"/><rect x="383.5" y="43.5" width="1" height="1" fill="#c4c4c4"/>
<rect x="393.5" y="29.5" width="19" height="17" fill="#e2dfd4" stroke="#b8b8b8" stroke-width="1" stroke-dasharray="1.5 1.5"/><path d="M401 36 L412.5 46 L407.5 46.5 L410 51 L408 52 L405.5 47.5 L402 50 Z" fill="#fafafa" stroke="#8a8a8a" stroke-width="0.9"/>
<path d="M419.5 37 h8.5 l-4.25 4.5 z" fill="#8a8a8a"/>
<rect x="441" y="37" width="13" height="10.5" fill="#e3e0d5" stroke="#cfcfcf" stroke-width="0.8"/><rect x="437" y="31" width="13" height="10.5" fill="#f1f1f1" stroke="#c8c8c8" stroke-width="1"/><rect x="439" y="33.5" width="9" height="2" fill="#d0d0d0"/><rect x="439" y="37" width="9" height="2" fill="#d0d0d0"/>
<path d="M462.2 37 h8.5 l-4.25 4.5 z" fill="#8a8a8a"/>
<rect x="479.5" y="30.5" width="11" height="10" fill="#fce94f" stroke="#c4a000" stroke-width="1"/><rect x="483.5" y="34.5" width="11" height="11" fill="#fce94f" stroke="#c4a000" stroke-width="1"/><rect x="489.2" y="40" width="9.5" height="9.5" rx="1.5" fill="#d92a2a"/><circle cx="494" cy="44.75" r="2.8" fill="none" stroke="#fff" stroke-width="1.1"/><line x1="492" y1="46.75" x2="496" y2="42.75" stroke="#fff" stroke-width="1.1"/>
<path d="M505 37 h8.5 l-4.25 4.5 z" fill="#4a4a4a"/>
<rect x="522" y="30.5" width="12" height="12" fill="#fce94f" stroke="#c4a000" stroke-width="1"/><path d="M537.5 49 L534.5 44 A3.5 3.5 0 1 1 540.5 44 Z" fill="#6c9ac8" stroke="#4a78a8" stroke-width="0.6"/><circle cx="537.5" cy="42.5" r="1.2" fill="#fff"/>
<rect x="553.7" y="31.5" width="1" height="1" fill="#c4c4c4"/><rect x="556.7" y="31.5" width="1" height="1" fill="#c4c4c4"/><rect x="553.7" y="34.5" width="1" height="1" fill="#c4c4c4"/><rect x="556.7" y="34.5" width="1" height="1" fill="#c4c4c4"/><rect x="553.7" y="37.5" width="1" height="1" fill="#c4c4c4"/><rect x="556.7" y="37.5" width="1" height="1" fill="#c4c4c4"/><rect x="553.7" y="40.5" width="1" height="1" fill="#c4c4c4"/><rect x="556.7" y="40.5" width="1" height="1" fill="#c4c4c4"/><rect x="553.7" y="43.5" width="1" height="1" fill="#c4c4c4"/><rect x="556.7" y="43.5" width="1" height="1" fill="#c4c4c4"/>
<circle cx="572.7" cy="36.2" r="7.5" fill="#5b8fcb" stroke="#3f6fae" stroke-width="0.8"/><text x="572" y="40.5" font-size="11" font-style="italic" font-weight="bold" text-anchor="middle" fill="#fff" font-family="Liberation Serif">i</text><path d="M576 40 L586 48.5 L582 49 L584.5 52.5 L582.5 53.5 L580 49.5 L577 52 Z" fill="#fff" stroke="#555" stroke-width="0.9"/>
<g stroke="#cccccc" fill="none" stroke-width="1"><rect x="596.5" y="30" width="18" height="17.5"/><line x1="596" y1="47.5" x2="615" y2="47.5" stroke-width="2"/></g><g fill="none" stroke="#dcc8c8" stroke-width="0.9"><ellipse cx="601" cy="34" rx="1.7" ry="1.3"/><ellipse cx="605" cy="34" rx="1.7" ry="1.3"/><ellipse cx="609" cy="34" rx="1.7" ry="1.3"/><ellipse cx="601" cy="39" rx="1.7" ry="1.3"/><ellipse cx="605" cy="39" rx="1.7" ry="1.3"/><ellipse cx="609" cy="39" rx="1.7" ry="1.3"/><ellipse cx="601" cy="44" rx="1.7" ry="1.3"/><ellipse cx="605" cy="44" rx="1.7" ry="1.3"/><ellipse cx="609" cy="44" rx="1.7" ry="1.3"/></g>
<polygon points="644.02,37.13 641.27,40.33 642.58,44.33 638.38,44.65 636.47,48.42 633.27,45.67 629.27,46.98 628.95,42.78 625.18,40.87 627.93,37.67 626.62,33.67 630.82,33.35 632.73,29.58 635.93,32.33 639.93,31.02 640.25,35.22" fill="#6f9bd6" stroke="#5a86c2" stroke-width="1" stroke-linejoin="round"/><circle cx="634.6" cy="39" r="2.8" fill="#f4f4f4"/>
<path d="M658 30.5 H671 V33.5 H662.5 L667 39 L662.5 44.5 H671.5 V47.5 H658 V45.5 L663.5 39 L658 32.5 Z" fill="#a012a0"/>
<rect x="684.5" y="30.5" width="17.5" height="17.5" fill="#f4f4f4" stroke="#d0d0d0" stroke-width="1"/><rect x="685" y="31" width="16.5" height="3.5" fill="#e2e2e2"/><path d="M686 37.5 h15 M686 40.5 h15 M686 43.5 h15 M690.5 35 v12" stroke="#dddddd" stroke-width="0.8"/>
<path d="M710 37 h8.5 l-4.25 4.5 z" fill="#8a8a8a"/>
<path d="M727 34 H745.5 M727.5 32 V36 M745 32 V36" stroke="#2f5277" stroke-width="1.3"/><rect x="726.5" y="38.5" width="19" height="7.5" rx="1" fill="#6d6d6d" stroke="#444" stroke-width="0.8"/><path d="M729.5 38.5 v3.5 M732 38.5 v2.5 M734.5 38.5 v3.5 M737 38.5 v2.5 M739.5 38.5 v3.5 M742 38.5 v2.5" stroke="#eee" stroke-width="0.8"/>
<path d="M753 37 h8.5 l-4.25 4.5 z" fill="#3a3a3a"/>
<path d="M771 29.5 H786 Q788.5 29.5 788.5 32 V37.5 Q788.5 40 786 40 H778 L775 44 V40 H771 Q768.5 40 768.5 37.5 V32 Q768.5 29.5 771 29.5 Z" fill="#fce98a" stroke="#c9b53a" stroke-width="1"/><circle cx="773.6" cy="44.9" r="2.8" fill="#5aa05a" stroke="#3a7a3a" stroke-width="0.7"/>
<g opacity="0.55"><circle cx="806" cy="37" r="7.5" fill="#ececec" stroke="#c8c8c8" stroke-width="1.6" stroke-dasharray="2.2 1.2"/><circle cx="806" cy="37" r="4" fill="#e4e4e4" stroke="#d0d0d0"/><path d="M808 40 L818 48 L814 48.5 L816 52 L814.5 53 L812.5 49 L809.5 51.5 Z" fill="#fff" stroke="#c0c0c0" stroke-width="0.8"/></g>
<path d="M824.8 37 h8.5 l-4.25 4.5 z" fill="#8a8a8a"/>
<g opacity="0.6"><rect x="-2" y="64" width="15" height="17" rx="2" fill="#e0e0e0" stroke="#bdbdbd"/><rect x="1" y="66" width="9" height="5" fill="#cfcfcf"/><path d="M8 84 L15 71 L17 72.5 L10 85 Z" fill="#e8c8b8" stroke="#c8a898" stroke-width="0.7"/></g>
<path d="M27.5 80.5 L41.5 67" stroke="#b8b8b8" stroke-width="0.9" stroke-dasharray="1.6 1.6"/><rect x="25.5" y="79" width="3" height="3" fill="none" stroke="#b8b8b8" stroke-width="0.8"/><rect x="40.5" y="65" width="3" height="3" fill="none" stroke="#b8b8b8" stroke-width="0.8"/>
<path d="M51.7 72 h8.5 l-4.25 4.5 z" fill="#7a7a7a"/>
<g fill="none" stroke="#c4c4c4" stroke-width="0.9"><circle cx="76" cy="66.5" r="2.3"/><circle cx="84.5" cy="68" r="2.3"/><circle cx="69.5" cy="73.5" r="2.3"/></g>
<rect x="78" y="75" width="9.5" height="9.5" rx="1.5" fill="#cdc8b4"/><circle cx="82.75" cy="79.75" r="2" fill="none" stroke="#fff" stroke-width="1"/>
<g stroke="#c0c0c0" fill="none" stroke-width="0.9"><rect x="100" y="65.5" width="4" height="4"/><path d="M104 67.5 H114 M101.5 70 L99 82"/></g><path d="M104 83 L114 72 M106 72 L115 82" stroke="#d4d0c0" stroke-width="2.4"/>
<path d="M123 72 h8.5 l-4.25 4.5 z" fill="#7a7a7a"/>
<g fill="#dcd8c6" stroke="#cfcbb8" stroke-width="0.6"><rect x="140.5" y="65" width="17.5" height="4"/><rect x="140.5" y="70.5" width="17.5" height="4"/><rect x="140.5" y="76" width="17.5" height="4"/><rect x="140.5" y="81" width="17.5" height="3"/></g><path d="M146 83 L155 65 L158 66.5 L149 84 Z" fill="#e8e8e8" stroke="#b8b8b8" stroke-width="0.8"/>
<rect x="169.5" y="64.5" width="14" height="12" fill="#e2dfd2"/><path d="M171.5 71 H185.5 V84 H171.5 Z M170 69.5 H186.5 M175 72 V83 M178.5 72 V83 M182 72 V83" fill="#ece6e6" stroke="#d4b4b4" stroke-width="1"/>
<path d="M198.5 70.5 L213 75 M199 75 L213 70.5" stroke="#c8c8c8" stroke-width="1.6"/><ellipse cx="214.5" cy="69.5" rx="2.6" ry="2.2" fill="none" stroke="#c8b4b4" stroke-width="1.1"/><ellipse cx="214.5" cy="77.5" rx="2.6" ry="2.2" fill="none" stroke="#c8b4b4" stroke-width="1.1"/>
<g fill="#f6f6f6" stroke="#cdcdcd" stroke-width="0.9"><path d="M234.5 64.5 H241 L244.5 68 V78 H234.5 Z"/><path d="M230.5 68.5 H237 L240.5 72 V82.5 H230.5 Z"/></g><path d="M232 75 h6 M232 77.5 h6 M232 80 h6" stroke="#d8d8d8" stroke-width="0.7"/>
<rect x="259.5" y="64.5" width="14" height="18" rx="1.5" fill="#ecebe6" stroke="#cfcdc4" stroke-width="1"/><rect x="262" y="63.5" width="9" height="3.5" fill="#dcdcdc"/><rect x="262" y="69" width="9" height="11" fill="#fafafa" stroke="#d8d8d8" stroke-width="0.7"/>
<path d="M288.5 72 L294 66.5 V69.5 Q303.5 69.5 303.5 76 Q303.5 82 296 81.5 Q300 80 300 76.5 Q300 73.5 294 74 V77 Z" fill="#dcd0cc"/>
<path d="M332.5 72 L327 66.5 V69.5 Q317.5 69.5 317.5 76 Q317.5 82 325 81.5 Q321 80 321 76.5 Q321 73.5 327 74 V77 Z" fill="#ced4cc"/>

<rect x="344.0" y="63.5" width="9" height="5" fill="#f2f2f2" stroke="#cfcfcf" stroke-width="0.8"/><path d="M345.0 72 L353.5 82.5 L363.0 64.5 L363.0 69 L353.5 71 Z" fill="#eceef0" stroke="#d4d8dc" stroke-width="0.8"/><circle cx="345.0" cy="72" r="1.2" fill="#d89a9a"/><circle cx="353.5" cy="71" r="1.1" fill="#a0a0d8"/><circle cx="363.0" cy="64.5" r="1.1" fill="#a0a0d8"/><circle cx="363.0" cy="68.5" r="1.1" fill="#a0a0d8"/><circle cx="353.5" cy="83" r="1.1" fill="#a0a0d8"/>
<rect x="356" y="74.5" width="9.5" height="9.5" rx="1.5" fill="#d6d2c0"/><circle cx="360.75" cy="79.25" r="2" fill="none" stroke="#fff" stroke-width="1"/>

<rect x="373.2" y="63.5" width="9" height="5" fill="#f2f2f2" stroke="#cfcfcf" stroke-width="0.8"/><path d="M374.2 72 L382.7 82.5 L392.2 64.5 L392.2 69 L382.7 71 Z" fill="#eceef0" stroke="#d4d8dc" stroke-width="0.8"/><circle cx="374.2" cy="72" r="1.2" fill="#d89a9a"/><circle cx="382.7" cy="71" r="1.1" fill="#a0a0d8"/><circle cx="392.2" cy="64.5" r="1.1" fill="#a0a0d8"/><circle cx="392.2" cy="68.5" r="1.1" fill="#a0a0d8"/><circle cx="382.7" cy="83" r="1.1" fill="#a0a0d8"/>
<path d="M385 84 L394 70 M388 84 L396 72" stroke="#dcdcc8" stroke-width="1.2"/>
<rect x="407" y="66" width="1" height="1" fill="#c4c4c4"/><rect x="410" y="66" width="1" height="1" fill="#c4c4c4"/><rect x="407" y="69" width="1" height="1" fill="#c4c4c4"/><rect x="410" y="69" width="1" height="1" fill="#c4c4c4"/><rect x="407" y="72" width="1" height="1" fill="#c4c4c4"/><rect x="410" y="72" width="1" height="1" fill="#c4c4c4"/><rect x="407" y="75" width="1" height="1" fill="#c4c4c4"/><rect x="410" y="75" width="1" height="1" fill="#c4c4c4"/><rect x="407" y="78" width="1" height="1" fill="#c4c4c4"/><rect x="410" y="78" width="1" height="1" fill="#c4c4c4"/><rect x="407" y="81" width="1" height="1" fill="#c4c4c4"/><rect x="410" y="81" width="1" height="1" fill="#c4c4c4"/>
<path d="M418.7 71.45 L422.7 66.7 H437.2 V76.2 H422.7 Z" fill="#ecebe4" stroke="#d8d6cc" stroke-width="1"/><text x="429.95" y="74.7" font-size="8.5" font-weight="bold" text-anchor="middle" fill="#c4c2b8">abc</text>
<circle cx="456" cy="72" r="7" fill="#dcdcd4" stroke="#cfcfcf" stroke-width="0.8"/><path d="M456 72 V65 A7 7 0 0 1 462.5 74.5 Z" fill="#d8c8c8"/><path d="M456 72 L462.5 74.5 A7 7 0 0 1 451 77 Z" fill="#ccd8cc"/><rect x="457.5" y="78" width="3" height="5.5" fill="#d4d8d4"/><rect x="461" y="73" width="3" height="10.5" fill="#d4d8d4"/><rect x="464.5" y="78.5" width="3" height="5" fill="#d8cccc"/>
<line x1="476.5" y1="66" x2="476.5" y2="82" stroke="#d8d8d8" stroke-width="1" />
<path d="M484 71.45 L488 66.7 H503 V76.2 H488 Z" fill="#d8e8f8" stroke="#3a8ae0" stroke-width="1"/><text x="495.5" y="74.7" font-size="8.5" font-weight="bold" text-anchor="middle" fill="#333">ab</text>
<circle cx="501.2" cy="78.7" r="4.2" fill="#a01818" stroke="#801010" stroke-width="0.6"/><circle cx="500" cy="77.5" r="1.2" fill="#e06060"/>
<path d="M514 71.45 L518 66.7 H532.7 V76.2 H518 Z" fill="#ffffff" stroke="#e02020" stroke-width="1"/><text x="525.35" y="74.7" font-size="8.5" font-weight="bold" text-anchor="middle" fill="#e02020">abc</text>
<line x1="542.5" y1="66" x2="542.5" y2="82" stroke="#d8d8d8" stroke-width="1" />
<path d="M550 71.45 L554 66.7 H568.7 V76.2 H554 Z" fill="#ecebe4" stroke="#d8d6cc" stroke-width="1"/><text x="561.35" y="74.7" font-size="8.5" font-weight="bold" text-anchor="middle" fill="#c4c2b8">abc</text>
<circle cx="566.7" cy="78.7" r="4" fill="#d8cccc"/>
<path d="M579 71.45 L583 66.7 H598 V76.2 H583 Z" fill="#ecebe4" stroke="#d8d6cc" stroke-width="1"/><text x="590.5" y="74.7" font-size="8.5" font-weight="bold" text-anchor="middle" fill="#c4c2b8">abc</text>
<path d="M587 80.5 Q593.5 75 600 80.5 Q593.5 86 587 80.5 Z" fill="#f0f0f0" stroke="#cfcfcf" stroke-width="0.8"/><circle cx="593.5" cy="80.5" r="1.8" fill="#cfcfcf"/>
<path d="M609 71.55 L613 66.8 H627.7 V76.3 H613 Z" fill="#ecebe4" stroke="#d8d6cc" stroke-width="1"/><text x="620.35" y="74.8" font-size="8.5" font-weight="bold" text-anchor="middle" fill="#c4c2b8">abc</text>
<rect x="620.5" y="75" width="9.5" height="9.5" rx="1.5" fill="#cfcfcf"/><path d="M622.5 79.75 h4 M625 77.5 l2.5 2.25 l-2.5 2.25" stroke="#fff" stroke-width="1.3" fill="none"/>
<path d="M638.4 71.55 L642.4 66.8 H657.1 V76.3 H642.4 Z" fill="#ecebe4" stroke="#d8d6cc" stroke-width="1"/><text x="649.75" y="74.8" font-size="8.5" font-weight="bold" text-anchor="middle" fill="#c4c2b8">abc</text>
<rect x="650" y="75" width="9.5" height="9.5" rx="1.5" fill="#cfcfcf"/><circle cx="654.75" cy="79.75" r="2.5" fill="none" stroke="#fff" stroke-width="1.2"/>
<path d="M667.5 71.55 L671.5 66.8 H686.2 V76.3 H671.5 Z" fill="#ecebe4" stroke="#d8d6cc" stroke-width="1"/><text x="678.85" y="74.8" font-size="8.5" font-weight="bold" text-anchor="middle" fill="#c4c2b8">abc</text>
<rect x="679.5" y="75" width="9.5" height="9.5" rx="1.5" fill="#d6d2c0"/><path d="M681.5 82.5 L687 77" stroke="#fff" stroke-width="1.5"/>
<rect x="701.5" y="66" width="1" height="1" fill="#c4c4c4"/><rect x="704.5" y="66" width="1" height="1" fill="#c4c4c4"/><rect x="701.5" y="69" width="1" height="1" fill="#c4c4c4"/><rect x="704.5" y="69" width="1" height="1" fill="#c4c4c4"/><rect x="701.5" y="72" width="1" height="1" fill="#c4c4c4"/><rect x="704.5" y="72" width="1" height="1" fill="#c4c4c4"/><rect x="701.5" y="75" width="1" height="1" fill="#c4c4c4"/><rect x="704.5" y="75" width="1" height="1" fill="#c4c4c4"/><rect x="701.5" y="78" width="1" height="1" fill="#c4c4c4"/><rect x="704.5" y="78" width="1" height="1" fill="#c4c4c4"/><rect x="701.5" y="81" width="1" height="1" fill="#c4c4c4"/><rect x="704.5" y="81" width="1" height="1" fill="#c4c4c4"/>
<circle cx="723.6" cy="71.3" r="10" fill="#5a84b8" stroke="#2a4a78" stroke-width="1"/><path d="M714 69 Q720 66 724 70 Q728 74 733 70 M716 75 Q721 72 726 76 M718 63.5 Q722 67 727 63" stroke="#c8dcf0" stroke-width="1.2" fill="none"/><path d="M716 80 Q716 76 720 75 L722 77 H725 L727 75 Q731 76 731 80 Z" fill="#000"/><ellipse cx="719" cy="81.5" rx="3.5" ry="2.5" fill="#000"/><ellipse cx="728.5" cy="81.5" rx="3.5" ry="2.5" fill="#000"/><ellipse cx="719" cy="81.5" rx="1.8" ry="1.2" fill="#ddd"/><ellipse cx="728.5" cy="81.5" rx="1.8" ry="1.2" fill="#ddd"/>
<rect x="746.5" y="66" width="1" height="1" fill="#c4c4c4"/><rect x="749.5" y="66" width="1" height="1" fill="#c4c4c4"/><rect x="746.5" y="69" width="1" height="1" fill="#c4c4c4"/><rect x="749.5" y="69" width="1" height="1" fill="#c4c4c4"/><rect x="746.5" y="72" width="1" height="1" fill="#c4c4c4"/><rect x="749.5" y="72" width="1" height="1" fill="#c4c4c4"/><rect x="746.5" y="75" width="1" height="1" fill="#c4c4c4"/><rect x="749.5" y="75" width="1" height="1" fill="#c4c4c4"/><rect x="746.5" y="78" width="1" height="1" fill="#c4c4c4"/><rect x="749.5" y="78" width="1" height="1" fill="#c4c4c4"/><rect x="746.5" y="81" width="1" height="1" fill="#c4c4c4"/><rect x="749.5" y="81" width="1" height="1" fill="#c4c4c4"/>
<path d="M769 64.5 Q762 64.5 762 68 V71 H769 V72 H762 Q759.5 72 759.5 75.5 Q759.5 79.5 762.5 79.5 H764 V76.5 Q764 74 767 74 H772 Q774 74 774 72 V67 Q774 64.5 769 64.5 Z" fill="#3a72b0"/><path d="M769 83 Q776 83 776 79.5 V76.5 H769 V75.5 H776 Q778.5 75.5 778.5 72 Q778.5 68 775.5 68 H774 V71 Q774 73.5 771 73.5 H766 Q764 73.5 764 75.5 V80.5 Q764 83 769 83 Z" fill="#f5c93a"/><path d="M772 78.5 L777.5 81 L772 83.5" fill="none" stroke="#222" stroke-width="1.1"/>
<path d="M788 82 V76 Q795 70 799 72 L808 80 V82 Z" fill="#00e000" stroke="#000" stroke-width="1.4" stroke-linejoin="round"/><circle cx="803.6" cy="66.8" r="2.6" fill="#ffee22"/><path d="M803.6 62.5 v8.6 M799.3 66.8 h8.6 M800.6 63.8 l6 6 M806.6 63.8 l-6 6" stroke="#ffee22" stroke-width="0.9"/>
<path d="M835 71 A8.5 8.5 0 1 0 832 79.5" fill="none" stroke="#3a9a9a" stroke-width="3"/><path d="M837.5 70 L833 74.5 L830 69.5 Z" fill="#3a9a9a"/><circle cx="826.8" cy="73" r="5" fill="#eeeeee"/><text x="826.5" y="76.5" font-size="9" text-anchor="middle" fill="#888">V</text><rect x="830" y="76" width="3" height="3" fill="#e8c040"/>
<path d="M846.5 64 H867.5 V84 H846.5 Z" fill="#e8f0f8"/><path d="M848 65 Q853 68 852 72 Q850 76 855 79 Q860 82 866 83 M851 64 Q858 68 857 72 Q856 76 862 78 Q866 79 867 76 M854 64 Q862 66 866 70" fill="none" stroke="#7aaad8" stroke-width="1.4"/><path d="M846.5 68 Q852 70 849 75 Q847 79 852 84" fill="none" stroke="#a8c8e8" stroke-width="2"/>
<path d="M876 74 Q882 71 888 74 V78 Q888 82 882 84 Q876 82 876 78 Z" fill="#222"/><path d="M878 79 L886 74.5 M878.5 81.5 L886 77.5" stroke="#fff" stroke-width="1"/><path d="M877 64.5 L890.5 70 L895 82" fill="none" stroke="#2a7ad8" stroke-width="1.5"/><path d="M893 80 l2 3.5 l2 -3.5 z" fill="#2a7ad8"/><circle cx="890.5" cy="69.9" r="2.3" fill="#ff1a1a"/>
<path d="M904.5 67 L909 63.3 H926 V80 L921.5 84 H904.5 Z" fill="#e6be22"/><path d="M904.5 67 H921.5 V84" fill="none" stroke="#b8941a" stroke-width="0.8"/><path d="M921.5 67 L926 63.3" stroke="#b8941a" stroke-width="0.8"/><path d="M906 75 H920" stroke="#c49c1a" stroke-width="0.8"/><rect x="910.5" y="70" width="4" height="1.3" fill="#8a6a10"/><rect x="910.5" y="78" width="4" height="1.3" fill="#8a6a10"/><path d="M904.5 67 L909 63.3 H926 L921.5 67 Z" fill="#f4d84a"/>
<rect x="934" y="77.5" width="21.5" height="6.5" fill="#2a10f0"/><path d="M935.5 84 V74 Q935.5 65 944.75 65 Q954 65 954 74 V84" fill="none" stroke="#222" stroke-width="3"/><path d="M938.5 84 V74 Q938.5 68 944.75 68 Q951 68 951 74 V84" fill="none" stroke="#777" stroke-width="0.8"/>
<path d="M966 73 V82.5 H982.5 V73" fill="none" stroke="#1a3ee0" stroke-width="2.6"/><path d="M974.25 64 V76 M969 71.5 L974.25 77 L979.5 71.5" fill="none" stroke="#1a3ee0" stroke-width="2.6"/>
<path d="M1001 72 H1009 L1013 76 V83.5 H1001 Z" fill="#fff" stroke="#1a3ee0" stroke-width="2"/><path d="M1003.5 78 h6 M1003.5 81 h6" stroke="#1a3ee0" stroke-width="1.2"/><path d="M999 64 V72 H993.5 M996.5 68.5 L993 72 L996.5 75.5" fill="none" stroke="#1a3ee0" stroke-width="2.6"/>
<text x="1032.8" y="77" font-size="8.5" font-weight="bold" text-anchor="middle" fill="#333">TCF</text>
<circle cx="1042.30" cy="73.50" r="2" fill="#4a6078"/>
<circle cx="1039.52" cy="80.22" r="1.3" fill="#4a6078"/>
<circle cx="1032.80" cy="83.00" r="2" fill="#4a6078"/>
<circle cx="1026.08" cy="80.22" r="1.3" fill="#4a6078"/>
<circle cx="1023.30" cy="73.50" r="2" fill="#4a6078"/>
<circle cx="1026.08" cy="66.78" r="1.3" fill="#4a6078"/>
<circle cx="1032.80" cy="64.00" r="2" fill="#4a6078"/>
<circle cx="1039.52" cy="66.78" r="1.3" fill="#4a6078"/>
<rect x="1052" y="63.5" width="15" height="2.5" fill="#00e000"/><rect x="1052" y="67.3" width="15" height="2.5" fill="#00e000"/><rect x="1052" y="71" width="15" height="2.5" fill="#00e000"/><rect x="1052" y="75.5" width="15" height="2.5" fill="#ff2020"/><rect x="1052" y="79.2" width="15" height="2.5" fill="#ff2020"/><rect x="1052" y="83" width="15" height="1.5" fill="#ff2020"/><path d="M1067 68 h6 M1070 65 v6 M1067 77 h6" stroke="#1a3ee0" stroke-width="2"/>
<rect x="1081.5" y="64.5" width="20.5" height="19" fill="#d8d4c8" stroke="#333" stroke-width="1.2"/><rect x="1084" y="67" width="15" height="13.5" fill="#f8f8f8" stroke="#555" stroke-width="0.8"/><path d="M1086 70 h5 M1086 70 v5 M1088 76 l6 -5" stroke="#1a3ee0" stroke-width="1.2"/><path d="M1094 78 l2 -4 l2 4 z" fill="#e8c020"/>
<path d="M1112.7 75.5 L1118.2 83 L1131.2 65.5" fill="none" stroke="#0a9a0a" stroke-width="2.6"/>
<path d="M1112 64 h3 l1 1 h4 v6 h-8 z" fill="#f0d060"/><path d="M1116 68 v4 l-1.5 -1.5 m1.5 1.5 l1.5 -1.5" stroke="#3a7ad0" stroke-width="1" fill="none"/>
<path d="M1140 75.5 L1145.5 83 L1158.5 65.5" fill="none" stroke="#0a9a0a" stroke-width="2.6"/>
<circle cx="1143.5" cy="67" r="3" fill="none" stroke="#8ab040" stroke-width="1.4"/><path d="M1145 68.5 l2 2" stroke="#e8a020" stroke-width="1.2"/>
<path d="M1171 75.5 L1176.5 83 L1189.5 65.5" fill="none" stroke="#0a9a0a" stroke-width="2.6"/>
<text x="1173.5" y="70.5" font-size="8" font-weight="bold" fill="#222" text-anchor="middle">1</text>
<path d="M1196.3 72 h8.5 l-4.25 4.5 z" fill="#4a4a4a"/>
<path d="M1213 69 L1222.3 65 L1231.7 69 V78.5 L1222.3 82.5 L1213 78.5 Z" fill="#a86a3a"/><path d="M1213 69 L1222.3 73 L1231.7 69 M1222.3 73 V82.5" stroke="#7a4a20" stroke-width="0.8" fill="none"/><path d="M1213 69 L1209.5 65.5 L1218.5 62 L1222.3 65 Z M1231.7 69 L1235 65.5 L1226 62 L1222.3 65 Z" fill="#c88a52"/><path d="M1222.3 73 V82.5 L1231.7 78.5 V69 Z" fill="#8a5228"/>
<path d="M1242 79 L1254.5 66 L1261.5 65 L1262 72 L1249 84.5 Z" fill="#fff" stroke="#333" stroke-width="1.1"/><circle cx="1258" cy="68.5" r="1.6" fill="none" stroke="#333" stroke-width="0.9"/><text x="1252" y="77.5" font-size="5.5" fill="#333" transform="rotate(-45 1252 76)" text-anchor="middle">label</text>
<path d="M1268.25 72 h8.5 l-4.25 4.5 z" fill="#4a4a4a"/>
<rect x="1283.75" y="64.75" width="21" height="19" fill="#4a7bd0"/><text x="1294.25" y="78.5" font-size="10.5" fill="#fff" text-anchor="middle" textLength="20" lengthAdjust="spacingAndGlyphs">ARR</text>
<path d="M1329 70.5 l3.5 3.5 l-3.5 3.5 M1333.5 70.5 l3.5 3.5 l-3.5 3.5" fill="none" stroke="#333" stroke-width="1.4"/>
<rect x="1347" y="66" width="1" height="1" fill="#c4c4c4"/><rect x="1350" y="66" width="1" height="1" fill="#c4c4c4"/><rect x="1347" y="69" width="1" height="1" fill="#c4c4c4"/><rect x="1350" y="69" width="1" height="1" fill="#c4c4c4"/><rect x="1347" y="72" width="1" height="1" fill="#c4c4c4"/><rect x="1350" y="72" width="1" height="1" fill="#c4c4c4"/><rect x="1347" y="75" width="1" height="1" fill="#c4c4c4"/><rect x="1350" y="75" width="1" height="1" fill="#c4c4c4"/><rect x="1347" y="78" width="1" height="1" fill="#c4c4c4"/><rect x="1350" y="78" width="1" height="1" fill="#c4c4c4"/><rect x="1347" y="81" width="1" height="1" fill="#c4c4c4"/><rect x="1350" y="81" width="1" height="1" fill="#c4c4c4"/>
<rect x="1360.6" y="64" width="18.4" height="19" rx="1" fill="#5b8fcb" stroke="#2a3a50" stroke-width="0.8"/><rect x="1360.6" y="64" width="4" height="19" fill="#2a3a50"/><text x="1372" y="78" font-size="11" fill="#fff" text-anchor="middle">?</text>
<rect x="1392" y="66" width="1" height="1" fill="#c4c4c4"/><rect x="1395" y="66" width="1" height="1" fill="#c4c4c4"/><rect x="1392" y="69" width="1" height="1" fill="#c4c4c4"/><rect x="1395" y="69" width="1" height="1" fill="#c4c4c4"/><rect x="1392" y="72" width="1" height="1" fill="#c4c4c4"/><rect x="1395" y="72" width="1" height="1" fill="#c4c4c4"/><rect x="1392" y="75" width="1" height="1" fill="#c4c4c4"/><rect x="1395" y="75" width="1" height="1" fill="#c4c4c4"/><rect x="1392" y="78" width="1" height="1" fill="#c4c4c4"/><rect x="1395" y="78" width="1" height="1" fill="#c4c4c4"/><rect x="1392" y="81" width="1" height="1" fill="#c4c4c4"/><rect x="1395" y="81" width="1" height="1" fill="#c4c4c4"/>
<path d="M-3 100 Q5 97 11 100 Q14 104 10 107 Q5 109 3 114 Q0 118 -3 116 Z" fill="#dcdcd8" stroke="#c6c6c2" stroke-width="1.1"/><rect x="5.5" y="110.5" width="7.7" height="8.2" rx="1" fill="#f4eeee" stroke="#e0c8c8" stroke-width="0.9"/><path d="M7 112 l4.7 5.2 M11.7 112 l-4.7 5.2" stroke="#e0c0c0" stroke-width="1.1"/>
<path d="M23 102 Q30 97.5 37 100 Q42.5 101 42 105 Q41 108 35 107.5 Q31 108 29.5 112 Q28 117 25 116 Q21.5 114 22 107 Z" fill="#dcdcd8" stroke="#c6c6c2" stroke-width="1.1"/>
<path d="M52 113 Q51 109 56 105 L63 100 Q68 97 70.5 101 Q72 105 68 108 L60 114.5 Q55 119 52 113 Z" fill="#dcdcd8" stroke="#c6c6c2" stroke-width="1.3"/><path d="M55 112 L66 103" stroke="#e6e6e4" stroke-width="3"/>
<g fill="none" stroke="#c4c4c4" stroke-width="0.9"><rect x="81" y="98.5" width="3" height="3"/><path d="M82.5 101.5 L88 111 L92 102 H100"/><rect x="87" y="110" width="3" height="3"/><rect x="92.5" y="100.5" width="3" height="3"/><rect x="97.5" y="100.5" width="3" height="3"/></g><rect x="91.5" y="109" width="9.7" height="9.7" rx="1.5" fill="#e8e8e8" stroke="#bcbcbc" stroke-width="1"/><circle cx="96.35" cy="113.85" r="2.6" fill="none" stroke="#c0c0c0" stroke-width="1"/>
<path d="M117.5 97.5 V116 M110.5 107.5 H130 M122.5 108 V118" stroke="#c8c8c8" stroke-width="1"/><circle cx="117.5" cy="107.5" r="1.6" fill="none" stroke="#c8c8c8"/><circle cx="122.5" cy="107.5" r="1.6" fill="none" stroke="#c8c8c8"/><rect x="123.5" y="98.5" width="5.5" height="5.5" fill="#f2f2f2" stroke="#c8c8c8" stroke-width="0.9"/><rect x="110.5" y="112.5" width="5.5" height="5.5" fill="#f4eeee" stroke="#e0c8c8" stroke-width="0.9"/><path d="M111.5 113.5 l3.5 3.5 M115 113.5 l-3.5 3.5" stroke="#e0c0c0" stroke-width="0.8"/>
<path d="M140.4 104 Q140.4 98.5 145.4 99 Q148.9 99.5 148.9 104 Q148.9 108 145.4 108.5 Q140.4 109 140.4 104 Z M158.4 104 Q158.4 98.5 153.4 99 Q149.9 99.5 149.9 104 Q149.9 108 153.4 108.5 Q158.4 109 158.4 104 Z" fill="#dcdcd8" stroke="#c6c6c2" stroke-width="1"/><path d="M146.4 101 L152.4 113 M152.4 101 L146.4 113" stroke="#c8c8c8" stroke-width="1"/><ellipse cx="145.4" cy="114.5" rx="2.5" ry="2.2" fill="none" stroke="#d4b4b4" stroke-width="1"/><ellipse cx="153.4" cy="114.5" rx="2.5" ry="2.2" fill="none" stroke="#d4b4b4" stroke-width="1"/>
<path d="M169.7 104 Q169.7 98.5 174.7 99 Q178.2 99.5 178.2 104 Q178.2 108 174.7 108.5 Q169.7 109 169.7 104 Z M187.7 104 Q187.7 98.5 182.7 99 Q179.2 99.5 179.2 104 Q179.2 108 182.7 108.5 Q187.7 109 187.7 104 Z" fill="#dcdcd8" stroke="#c6c6c2" stroke-width="1"/><path d="M175.7 101 L181.7 113 M181.7 101 L175.7 113" stroke="#c8c8c8" stroke-width="1"/><ellipse cx="174.7" cy="114.5" rx="2.5" ry="2.2" fill="none" stroke="#d4b4b4" stroke-width="1"/><ellipse cx="182.7" cy="114.5" rx="2.5" ry="2.2" fill="none" stroke="#d4b4b4" stroke-width="1"/>
<path d="M199 104 Q199 98.5 204 99 Q208 99.5 208 104 Q208 108 204 108.5 Q199 109 199 104 Z M218 104 Q218 98.5 213 99 Q209 99.5 209 104 Q209 108 213 108.5 Q218 109 218 104 Z" fill="#dcdcd8" stroke="#c6c6c2" stroke-width="1"/><path d="M206 103 H214 M206 105.5 H214 M203 109 Q205 113 209 116" stroke="#c4c4c4" stroke-width="1" fill="none"/>
<g stroke="#d8d8d8" stroke-width="1"><path d="M229 100.5 H245.5 M229 103 H245.5 M229 108 H245.5 M229 110.5 H245.5 M229 115 H245.5 M229 117.5 H245.5"/></g><path d="M235 101.5 Q237 99 239 101.5 M235 109 Q237 106.5 239 109 M235 116 Q237 113.5 239 116" stroke="#bcbcbc" stroke-width="0.8" fill="none"/>
<path d="M267 100 V110 L275 104 Z" fill="#dedede" stroke="#c8c8c8" stroke-width="0.9"/><path d="M266 117 L270 108 L274 117 Z" fill="none" stroke="#d0d0d0" stroke-width="0.9"/><path d="M264 101 Q257.5 104 258.5 110 Q259.5 114 263 116" fill="none" stroke="#c8c8c8" stroke-width="1"/><path d="M262 99.5 l3 1.5 l-2.5 2" fill="none" stroke="#c8c8c8" stroke-width="0.9"/>
<path d="M283.2 106.5 h8.5 l-4.25 4.5 z" fill="#8a8a8a"/>
<rect x="303" y="100.5" width="1" height="1" fill="#c4c4c4"/><rect x="306" y="100.5" width="1" height="1" fill="#c4c4c4"/><rect x="303" y="103.5" width="1" height="1" fill="#c4c4c4"/><rect x="306" y="103.5" width="1" height="1" fill="#c4c4c4"/><rect x="303" y="106.5" width="1" height="1" fill="#c4c4c4"/><rect x="306" y="106.5" width="1" height="1" fill="#c4c4c4"/><rect x="303" y="109.5" width="1" height="1" fill="#c4c4c4"/><rect x="306" y="109.5" width="1" height="1" fill="#c4c4c4"/><rect x="303" y="112.5" width="1" height="1" fill="#c4c4c4"/><rect x="306" y="112.5" width="1" height="1" fill="#c4c4c4"/><rect x="303" y="115.5" width="1" height="1" fill="#c4c4c4"/><rect x="306" y="115.5" width="1" height="1" fill="#c4c4c4"/>
<g transform="translate(327 110) rotate(-45)"><path d="M-7.5 -9 V0 A7.5 7.5 0 0 0 7.5 0 V-9 H2 V0 A2 2 0 0 1 -2 0 V-9 Z" fill="#d40000" stroke="#9a0000" stroke-width="0.6"/><rect x="-7" y="-8.5" width="4.5" height="3.5" fill="#f2f2f2" stroke="#c05050" stroke-width="0.5"/><rect x="2.5" y="-8.5" width="4.5" height="3.5" fill="#f2f2f2" stroke="#c05050" stroke-width="0.5"/></g>
<g fill="none" stroke="#d0d0d0" stroke-width="1"><path d="M350 99 L356 109 L363 99 M356 109 V117 M356 104 L363 103.5 M356 108 L364 107"/><circle cx="350" cy="99" r="1.5"/><circle cx="363" cy="99" r="1.5"/><circle cx="364" cy="103.5" r="1.5"/><circle cx="364.5" cy="107" r="1.5"/><circle cx="356" cy="117" r="1.5"/></g>
<path d="M360 115 h7 l-3.5 3.5 z" fill="#8a8a8a"/>
<rect x="370.5" y="95.5" width="27" height="27" rx="2" fill="#dadada" stroke="#c4c4c4" stroke-width="1"/><rect x="377.5" y="100.5" width="2.5" height="2.5" fill="none" stroke="#b8b8b8" stroke-width="0.8"/><rect x="388" y="103.5" width="2.5" height="2.5" fill="none" stroke="#b8b8b8" stroke-width="0.8"/><rect x="383" y="112.5" width="2.5" height="2.5" fill="none" stroke="#b8b8b8" stroke-width="0.8"/><path d="M388.5 114.5 h6 l-3 3 z" fill="#8a8a8a"/>
<rect x="399.5" y="98.5" width="77" height="20" rx="2" fill="#efefef" stroke="#c8c8c8" stroke-width="1"/><line x1="461.5" y1="99" x2="461.5" y2="118" stroke="#d0d0d0"/><path d="M465.5 106 l3.5 -3.5 l3.5 3.5 z M465.5 111 l3.5 3.5 l3.5 -3.5 z" fill="#8c8c8c"/>
<text x="404" y="112.7" font-size="10.50" fill="#6a6a6a" >12</text>
<rect x="478.9" y="98.5" width="79.3" height="20" rx="2" fill="#f4f4f4" stroke="#cfcfcf" stroke-width="1"/><path d="M542.9 106.5 h7 l-3.5 3.5 z" fill="#8c8c8c"/>
<text x="481.8" y="113" font-size="11.00" fill="#6a6a6a" >px</text>
<path d="M572 107.5 L566 99 M572 107.5 L584 104 M572 107.5 V118" stroke="#3aaa3a" stroke-width="1.3"/><circle cx="572" cy="107.5" r="1.8" fill="#fff" stroke="#555" stroke-width="0.9"/>
<path d="M600 100 Q608 97.5 613 100 Q615.5 104 611 107 Q606 107 604 103 Z" fill="#a8a8a8" stroke="#333" stroke-width="0.9"/><path d="M595 104 Q594 99 600 99.5 Q605 100 605 106 Q605 110 609 113 Q610 118 604 118.5 Q598 118.5 598 112 Q598 108 595 104 Z" fill="#7ac87a" stroke="#222" stroke-width="1"/><path d="M608.5 114.5 h6.5 l-3.25 3.5 z" fill="#222"/>
<path d="M623.5 99.5 L642 118 M642 99.5 L623.5 118" stroke="#d8d8d8" stroke-width="1.4"/><circle cx="632.7" cy="108.8" r="1.5" fill="none" stroke="#c8c8c8"/>
<path d="M653 100 L659 107 L653 118 L663 111 L672 118 L666 108 L672 99.5 L663 105 Z" fill="#e2e0d6" stroke="#d0cec4" stroke-width="0.8"/>
<path d="M679.3 106.5 h8.5 l-4.25 4.5 z" fill="#8a8a8a"/>
<path d="M695 117 L700 104 L706 111 L712 100 M703 100 L713 111" stroke="#d0d0c8" stroke-width="1.4" fill="none"/><circle cx="700" cy="104" r="1.4" fill="none" stroke="#c8c8c8"/><circle cx="696" cy="116" r="1.4" fill="none" stroke="#c8c8c8"/>
<path d="M1 141 h8.5 l-4.25 4.5 z" fill="#8a8a8a"/>
<g fill="none" stroke="#c4c4c4" stroke-width="0.9"><rect x="18" y="134" width="6.5" height="6.5"/><path d="M18 134 l6.5 6.5 M24.5 134 l-6.5 6.5"/><rect x="17.7" y="145" width="8" height="8"/><path d="M17.7 145 l8 8 M25.7 145 l-8 8"/><path d="M30.5 133 L34.5 137 L30.5 141 L26.5 137 Z M26.5 137 H34.5 M30.5 133 V141"/><path d="M34 143 Q28 141 28 146.5 Q28 152.5 34.5 152" stroke-width="1.3"/><path d="M29 147 h4"/></g>
<g fill="none" stroke="#cfcfcf" stroke-width="0.9"><rect x="46.5" y="134.5" width="19.5" height="18"/><path d="M46.5 134.5 L53 150 L59.5 134.5 L66 152.5 M46.5 152.5 L53 150 L66 152.5 M59.5 134.5 L64.5 134.5"/></g><path d="M47.5 135 L53 150 L59.5 135" stroke="#d8d4c0" stroke-width="1.3" fill="none"/><g fill="#f6f6f6" stroke="#c8c8c0" stroke-width="0.8"><circle cx="47.5" cy="134.8" r="1.6"/><circle cx="59.5" cy="134.8" r="1.6"/><circle cx="64.5" cy="134.8" r="1.6"/><circle cx="53" cy="147.5" r="1.3"/></g>
<path d="M73 141 h8.5 l-4.25 4.5 z" fill="#8a8a8a"/>
<path d="M777 601 V621 H797.5" fill="none" stroke="#000" stroke-width="2"/><path d="M778.5 617 L787.2 602 L797 616" fill="none" stroke="#ff0000" stroke-width="1.8"/>
<path d="M803.2 609 h8.5 l-4.25 4.5 z" fill="#555555"/>
<path d="M820 601.5 Q820 608 825 612 L828 614.5 V621.5 H832 V614.5 L835 612 Q840 608 840 601.5" fill="none" stroke="#7a0a20" stroke-width="1.8"/><line x1="821.5" y1="606.7" x2="838.5" y2="606.7" stroke="#3a3ae0" stroke-width="1.6"/>
<path d="M846 609 h8.5 l-4.25 4.5 z" fill="#555555"/>
<g fill="#3a3ae0"><path d="M861.5 603.5 h13 v-2 l5 2.7 l-5 2.7 v-2 h-13 z"/><path d="M861.5 611 h13 v-2 l5 2.7 l-5 2.7 v-2 h-13 z"/><path d="M861.5 618 h13 v-2 l5 2.7 l-5 2.7 v-2 h-13 z"/></g><line x1="882" y1="601" x2="882" y2="622" stroke="#000" stroke-width="1.6"/><path d="M878.5 616 l3.5 4 l3.5 -4 z" fill="#333"/>
<text x="899.5" y="618.5" font-size="20" font-weight="bold" fill="#e8101a" text-anchor="middle" textLength="11.5" lengthAdjust="spacingAndGlyphs">2</text><path d="M910.5 601 V621 H891.5" fill="none" stroke="#000" stroke-width="2"/>
<path d="M933 611 L941.5 601.5 L941 615 L937.5 612.5 L934 621 L931 619.5 L934.5 611.5 Z" fill="#fff" stroke="#000" stroke-width="1.4" stroke-linejoin="round"/><path d="M933 620 L936 613" stroke="#000" stroke-width="2.5"/><path d="M923 602.5 h6 M921 606.5 h5 M922 610.5 h6 M921 614 h4 M922 617.5 h4" stroke="#555" stroke-width="0.9"/>
<rect x="949.5" y="601.5" width="21" height="20.5" fill="#fff" stroke="#000" stroke-width="1.3"/>
<line x1="953.0" y1="601.5" x2="953.0" y2="622" stroke="#000" stroke-width="1.1"/><line x1="949.5" y1="604.92" x2="970.5" y2="604.92" stroke="#000" stroke-width="1.1"/>
<line x1="956.5" y1="601.5" x2="956.5" y2="622" stroke="#000" stroke-width="1.1"/><line x1="949.5" y1="608.34" x2="970.5" y2="608.34" stroke="#000" stroke-width="1.1"/>
<line x1="960.0" y1="601.5" x2="960.0" y2="622" stroke="#000" stroke-width="1.1"/><line x1="949.5" y1="611.76" x2="970.5" y2="611.76" stroke="#000" stroke-width="1.1"/>
<line x1="963.5" y1="601.5" x2="963.5" y2="622" stroke="#000" stroke-width="1.1"/><line x1="949.5" y1="615.18" x2="970.5" y2="615.18" stroke="#000" stroke-width="1.1"/>
<line x1="967.0" y1="601.5" x2="967.0" y2="622" stroke="#000" stroke-width="1.1"/><line x1="949.5" y1="618.6" x2="970.5" y2="618.6" stroke="#000" stroke-width="1.1"/>
<defs><pattern id="mgrid" width="3" height="3" patternUnits="userSpaceOnUse"><rect width="3" height="3" fill="#1e4a8a"/><rect x="0.8" y="0.8" width="1.6" height="1.6" fill="#7ad8f0"/></pattern></defs>
<rect x="777.5" y="640" width="19.5" height="19.5" fill="url(#mgrid)"/><rect x="777.5" y="640" width="19.5" height="8" fill="#1e4a8a" opacity="0.55"/><path d="M777.5 659.5 V655 Q782.5 651 787.5 652 Q792.5 653 797.0 656 V659.5 Z" fill="#a89a88"/>
<path d="M778.5 640 V659 H797" fill="none" stroke="#000" stroke-width="1.8"/><path d="M779.5 656 L787.5 641 L796.5 656" fill="none" stroke="#ff0000" stroke-width="1.7"/>
<path d="M803.2 646.5 h8.5 l-4.25 4.5 z" fill="#555555"/>
<rect x="820" y="640" width="19.5" height="19.5" fill="url(#mgrid)"/><rect x="820" y="640" width="19.5" height="8" fill="#1e4a8a" opacity="0.55"/><path d="M820 659.5 V655 Q825 651 830 652 Q835 653 839.5 656 V659.5 Z" fill="#a89a88"/>
<path d="M821 641 Q821 647 825.5 650.5 L828 652.5 V659 H832 V652.5 L834.5 650.5 Q839 647 839 641" fill="none" stroke="#7a0a20" stroke-width="1.8"/><line x1="822" y1="645.5" x2="838" y2="645.5" stroke="#3a3ae0" stroke-width="1.6"/>
<path d="M846 646.5 h8.5 l-4.25 4.5 z" fill="#555555"/>
<rect x="861.5" y="639.5" width="21" height="21" rx="1" fill="#fafafa" stroke="#3a3a3a" stroke-width="1.2"/><g fill="none" stroke="#333" stroke-width="1"><path d="M864 640 Q866 649 862.5 652.5"/><path d="M867 640 Q868 648 871 653 Q867 655 863 652.5"/><path d="M869.5 640 Q870 646 871 649"/><path d="M880 640 Q878 649 881.5 652.5"/><path d="M877 640 Q876 648 873 653 Q877 655 881 652.5"/><path d="M874.5 640 Q874 646 873 649"/><path d="M863.5 653 V660 M865.5 654 L867 660 M880.5 653 V660 M878.5 654 L877 660"/></g><path d="M872 640 V655" stroke="#222" stroke-width="2"/><rect x="867.5" y="654.5" width="9" height="2.5" fill="#333"/><rect x="869" y="657.5" width="6" height="1.5" fill="#999"/><circle cx="862.8" cy="652.5" r="1.2" fill="#222"/><circle cx="881.2" cy="652.5" r="1.2" fill="#222"/>
<path d="M889 646.5 h8.5 l-4.25 4.5 z" fill="#555555"/>
<path d="M904.5 640.5 V659 H925" fill="none" stroke="#000" stroke-width="2"/>
<line x1="906" y1="642.5" x2="925" y2="642.5" stroke="#4a3ae8" stroke-width="1.8"/>
<line x1="906" y1="645.8" x2="923" y2="645.8" stroke="#4a3ae8" stroke-width="1.8"/>
<line x1="906" y1="649.1" x2="921" y2="649.1" stroke="#4a3ae8" stroke-width="1.8"/>
<line x1="906" y1="652.4" x2="918" y2="652.4" stroke="#4a3ae8" stroke-width="1.8"/>
<line x1="906" y1="655.7" x2="914" y2="655.7" stroke="#4a3ae8" stroke-width="1.8"/>
<path d="M931.4 646.5 h8.5 l-4.25 4.5 z" fill="#555555"/>
<path d="M776.5 709 A10 10 0 0 1 793.5 702.5 L797.5 699 V710 H787 L790.5 706.5 A5 5 0 0 0 782 709 Z" fill="#000"/><path d="M797.5 711.5 A10 10 0 0 1 780.5 718 L776.5 721.5 V710.5 H787 L783.5 714 A5 5 0 0 0 792 711.5 Z" fill="#000"/>
<path d="M806.5 708 L813 700 H826.5 V721 H806.5 Z" fill="#000"/><path d="M810 711 L815 704 H823 V717.5 H810 Z" fill="#fff"/>
<text x="838" y="709" font-size="10" font-weight="bold" text-anchor="middle" fill="#000" stroke="#000" stroke-width="0.9">Y</text><path d="M845.3 700 V714" stroke="#000" stroke-width="2"/><path d="M842.5 700 h5.5 M843 703.5 h4.5 M843 707 h4.5 M843 710.5 h4.5" stroke="#000" stroke-width="1.1"/><path d="M845 713 H855" stroke="#000" stroke-width="2"/><path d="M848.5 710 v4 M851 710 v4 M853.5 710 v4 M855 709.5 v5" stroke="#000" stroke-width="1.1"/><text x="850.5" y="721.5" font-size="10" font-weight="bold" text-anchor="middle" fill="#000" stroke="#000" stroke-width="0.9">X</text>
<text x="874.8" y="710.5" font-size="13.5" font-weight="bold" text-anchor="middle" fill="#000" stroke="#000" stroke-width="0.9">X</text><path d="M864.5 716.5 H885.5" stroke="#000" stroke-width="2.6"/><path d="M865.3 713 V720 M869.5 713.5 V719.5 M874.5 713.5 V719.5 M879.5 713.5 V719.5 M884.7 713 V720" stroke="#000" stroke-width="1.6"/>
<path d="M898 700 V721" stroke="#000" stroke-width="2.6"/><path d="M894.8 700 H901.2 M895.3 705 h5.4 M895.3 710 h5.4 M895.3 715 h5.4 M894.8 720.8 H901.2" stroke="#000" stroke-width="1.6"/><text x="909.5" y="715.5" font-size="13.5" font-weight="bold" text-anchor="middle" fill="#000" stroke="#000" stroke-width="0.9">Y</text>
<rect x="919.5" y="698.5" width="27.5" height="24" rx="3" fill="#dcdcdc" stroke="#bcbcbc" stroke-width="1"/><rect x="948" y="698.5" width="12.5" height="24" rx="3" fill="#e2e2e2" stroke="#c8c8c8" stroke-width="1"/><path d="M950.5 709 h7.5 l-3.75 3.5 z" fill="#777"/><rect x="924" y="701" width="19.5" height="19.5" fill="#fff" stroke="#000" stroke-width="1.8"/><rect x="926.5" y="704" width="3" height="3" fill="none" stroke="#000" stroke-width="0.9"/><path d="M928 709.5 l1.6 2.8 h-3.2 z" fill="none" stroke="#000" stroke-width="0.9"/><circle cx="928" cy="716.5" r="1.5" fill="none" stroke="#000" stroke-width="0.9"/><path d="M932 705.5 h9 M932 711 h9 M932 716.5 h9" stroke="#000" stroke-width="1.6"/>
<path d="M966 700 V720 H987" fill="none" stroke="#000" stroke-width="1.8"/><circle cx="977" cy="706" r="4" fill="#000"/><path d="M969.5 717 Q970 710.5 977 710.5 Q984 710.5 984.5 717 Z" fill="#000"/>
<path d="M778 750 L786.75 742.5 L795.5 750 M790 745 V742.5 H792.5 V747.5" fill="none" stroke="#000" stroke-width="1.8"/><path d="M780.5 749 L786.75 744 L793 749 V757.5 H789 V752.5 H784.5 V757.5 H780.5 Z" fill="#000"/>
<path d="M824 749 H811 M816.5 743 L810 749 L816.5 755" fill="none" stroke="#aaaaaa" stroke-width="3.2"/>
<path d="M837 749 H850 M844.5 743 L851 749 L844.5 755" fill="none" stroke="#aaaaaa" stroke-width="3.2"/>
<path d="M874.8 741 V757 M866.5 749 H883" stroke="#000" stroke-width="2.2"/><path d="M870.8 743.5 L874.8 739 L878.8 743.5 Z M870.8 754.5 L874.8 759 L878.8 754.5 Z M869 745 L864.5 749 L869 753 Z M880.5 745 L885 749 L880.5 753 Z" fill="#000"/>
<circle cx="902" cy="747.3" r="6.2" fill="none" stroke="#000" stroke-width="2.3"/><path d="M906.5 752 L912.5 758" stroke="#000" stroke-width="2.6"/>
<path d="M923 740 V757.5 H944" fill="none" stroke="#000" stroke-width="1.3"/><path d="M925 754 L931 747 L935 750.5 L942.5 743" fill="none" stroke="#000" stroke-width="2"/><path d="M939 742 h4.5 v4.5 z" fill="#000"/>
<path d="M954.5 741.5 H968 L971.5 745 V757.5 H954.5 Z" fill="#fff" stroke="#000" stroke-width="1.7"/><rect x="958" y="741.5" width="9" height="5" fill="none" stroke="#000" stroke-width="1.4"/><rect x="957.5" y="750.5" width="11" height="7" fill="#fff" stroke="#000" stroke-width="1.4"/></svg></body></html>
